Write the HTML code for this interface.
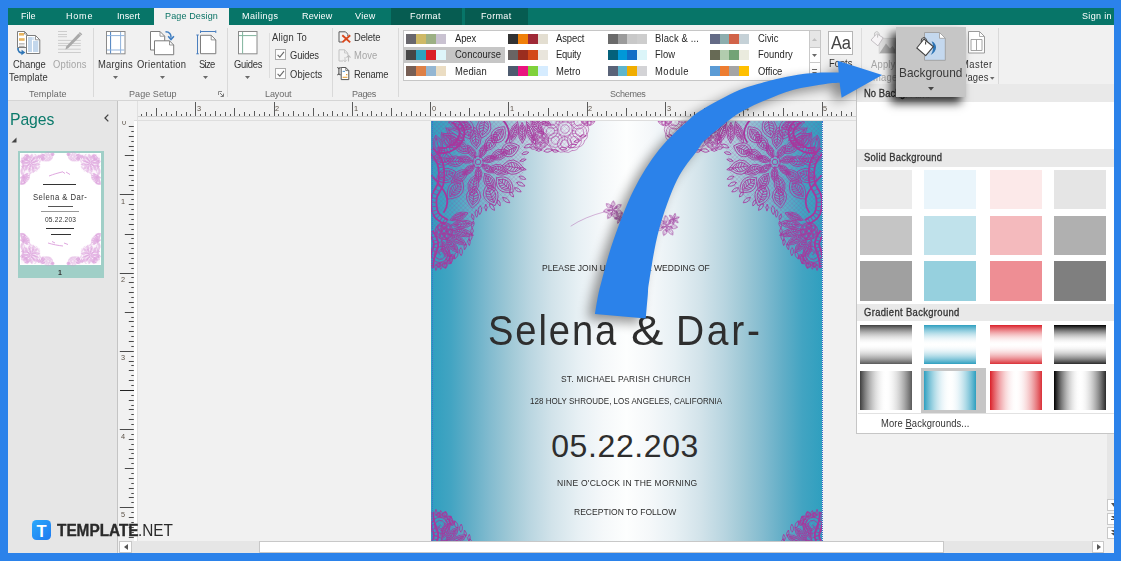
<!DOCTYPE html>
<html><head><meta charset="utf-8"><title>Publisher - Page Design Background</title>
<style>
html,body{margin:0;padding:0;}
body{width:1121px;height:561px;overflow:hidden;background:#2b82ea;position:relative;font-family:"Liberation Sans", sans-serif;}
.t{position:absolute;white-space:pre;line-height:normal;transform-origin:0 0;font-family:"Liberation Sans", sans-serif;}
.a{position:absolute;}

.win{position:absolute;left:8px;top:8px;width:1106px;height:545px;background:#f1f1f1;overflow:hidden;}
.sep{position:absolute;width:1px;background:#d8d8d8;}
svg{position:absolute;overflow:visible;}
.sw{position:absolute;width:52px;height:39.4px;}
.sc{position:absolute;height:10px;width:39.4px;display:flex;}
.sc i{display:block;flex:1;height:10px;}
.cb{position:absolute;width:9px;height:9px;border:1px solid #ababab;background:#fdfdfd;box-sizing:content-box;}
.sb{position:absolute;background:#fff;border:1px solid #c8c8c8;box-sizing:border-box;}

</style></head><body>
<div class="a" style="left:8px;top:8px;width:1106px;height:545px;background:#f1f1f1;"></div>
<div class="a" style="left:8px;top:8px;width:1106px;height:16.5px;background:#077568;"></div>
<div class="a" style="left:390.5px;top:8px;width:71px;height:16.5px;background:#065c51;"></div>
<div class="a" style="left:464.7px;top:8px;width:63.3px;height:16.5px;background:#065c51;"></div>
<div class="a" style="left:154px;top:8px;width:75px;height:17px;background:#f1f1f1;"></div>
<div class="a" style="left:8px;top:100px;width:1106px;height:1px;background:#d5d5d5;"></div>
<div class="a" style="left:92.5px;top:28px;width:1px;height:69px;background:#d9d9d9;"></div>
<div class="a" style="left:226.5px;top:28px;width:1px;height:69px;background:#d9d9d9;"></div>
<div class="a" style="left:331.6px;top:28px;width:1px;height:69px;background:#d9d9d9;"></div>
<div class="a" style="left:397.5px;top:28px;width:1px;height:69px;background:#d9d9d9;"></div>
<div class="a" style="left:268.5px;top:33px;width:1px;height:45px;background:#dddddd;"></div>
<div class="a" style="left:861px;top:28px;width:1px;height:56px;background:#dcdcdc;"></div>
<div class="a" style="left:998.2px;top:28px;width:1px;height:56px;background:#d9d9d9;"></div>
<svg style="left:112.5px;top:75.8px" width="5" height="3" viewBox="0 0 5 3"><path d="M0 0H5L2.5 3Z" fill="#6a6a6a"/></svg>
<svg style="left:160.0px;top:75.8px" width="5" height="3" viewBox="0 0 5 3"><path d="M0 0H5L2.5 3Z" fill="#6a6a6a"/></svg>
<svg style="left:203.0px;top:75.8px" width="5" height="3" viewBox="0 0 5 3"><path d="M0 0H5L2.5 3Z" fill="#6a6a6a"/></svg>
<svg style="left:244.5px;top:75.8px" width="5" height="3" viewBox="0 0 5 3"><path d="M0 0H5L2.5 3Z" fill="#6a6a6a"/></svg>
<svg style="left:217.5px;top:91.3px" width="6" height="6" viewBox="0 0 6 6"><path d="M0.5 4V0.5H4" fill="none" stroke="#8a8a8a" stroke-width="1"/><path d="M2 2L5.3 5.3M5.5 2.6V5.5H2.6" fill="none" stroke="#7a7a7a" stroke-width="1"/></svg>
<div class="cb" style="left:275px;top:49.3px"></div>
<svg style="left:276px;top:50.3px" width="10" height="10" viewBox="0 0 10 10"><path d="M1.6 4.8L3.8 7.2L8 1.8" fill="none" stroke="#6a6a6a" stroke-width="1.1"/></svg>
<div class="cb" style="left:275px;top:68px"></div>
<svg style="left:276px;top:69px" width="10" height="10" viewBox="0 0 10 10"><path d="M1.6 4.8L3.8 7.2L8 1.8" fill="none" stroke="#6a6a6a" stroke-width="1.1"/></svg>
<div class="a" style="left:402.5px;top:30px;width:418.5px;height:50.5px;background:#fff;border:1px solid #c6c6c6;box-sizing:border-box;"></div>
<div class="a" style="left:403.5px;top:47.3px;width:101.5px;height:15.6px;background:#c6c6c6;"></div>
<div class="sc" style="left:406.2px;top:34.1px;"><i style="background:#69676d"></i><i style="background:#ceb966"></i><i style="background:#9cb084"></i><i style="background:#c9c2d1"></i></div>
<div class="sc" style="left:406.2px;top:50.2px;"><i style="background:#464646"></i><i style="background:#2da2bf"></i><i style="background:#da1f28"></i><i style="background:#def5fa"></i></div>
<div class="sc" style="left:406.2px;top:66.4px;"><i style="background:#775f55"></i><i style="background:#dd8047"></i><i style="background:#94b6d2"></i><i style="background:#ebddc3"></i></div>
<div class="sc" style="left:508.2px;top:34.1px;"><i style="background:#323232"></i><i style="background:#f07f09"></i><i style="background:#9f2936"></i><i style="background:#e3ded1"></i></div>
<div class="sc" style="left:508.2px;top:50.2px;"><i style="background:#696464"></i><i style="background:#9b2d1f"></i><i style="background:#d34817"></i><i style="background:#e9e5dc"></i></div>
<div class="sc" style="left:508.2px;top:66.4px;"><i style="background:#4e5b6f"></i><i style="background:#e9157f"></i><i style="background:#7fd13b"></i><i style="background:#d6ecff"></i></div>
<div class="sc" style="left:607.8px;top:34.1px;"><i style="background:#6a6a6a"></i><i style="background:#9b9b9b"></i><i style="background:#c8c8c8"></i><i style="background:#cdcdcd"></i></div>
<div class="sc" style="left:607.8px;top:50.2px;"><i style="background:#04617b"></i><i style="background:#0098d8"></i><i style="background:#0f6fc6"></i><i style="background:#dbf5f9"></i></div>
<div class="sc" style="left:607.8px;top:66.4px;"><i style="background:#5a6378"></i><i style="background:#5fb5cc"></i><i style="background:#f0ad00"></i><i style="background:#d3d3d6"></i></div>
<div class="sc" style="left:709.7px;top:34.1px;"><i style="background:#646b86"></i><i style="background:#8cadae"></i><i style="background:#d16349"></i><i style="background:#c5d1d7"></i></div>
<div class="sc" style="left:709.7px;top:50.2px;"><i style="background:#676a55"></i><i style="background:#b2ccae"></i><i style="background:#72a376"></i><i style="background:#eaebde"></i></div>
<div class="sc" style="left:709.7px;top:66.4px;"><i style="background:#5b9bd5"></i><i style="background:#ed7d31"></i><i style="background:#a5a5a5"></i><i style="background:#ffc000"></i></div>
<div class="a" style="left:808.5px;top:31px;width:10.5px;height:48.5px;background:#ffffff;border-left:1px solid #c9c9c9;"></div>
<div class="a" style="left:809.5px;top:31px;width:10.5px;height:16px;background:#e6e6e6;"></div>
<div class="a" style="left:809.5px;top:47px;width:10.5px;height:1px;background:#c9c9c9;"></div>
<div class="a" style="left:809.5px;top:62.3px;width:10.5px;height:1px;background:#c9c9c9;"></div>
<svg style="left:812px;top:37.5px" width="5" height="3" viewBox="0 0 5 3"><path d="M0 3H5L2.5 0Z" fill="#c0c0c0"/></svg>
<svg style="left:812.1px;top:54.0px" width="5" height="3" viewBox="0 0 5 3"><path d="M0 0H5L2.5 3Z" fill="#6a6a6a"/></svg>
<div class="a" style="left:812px;top:69.3px;width:5.4px;height:1px;background:#6a6a6a;"></div>
<svg style="left:812.1px;top:71.5px" width="5" height="3" viewBox="0 0 5 3"><path d="M0 0H5L2.5 3Z" fill="#6a6a6a"/></svg>
<div class="a" style="left:827.8px;top:31px;width:25px;height:23.7px;background:#fff;border:1px solid #b5b5b5;box-sizing:border-box;"></div>
<div class="a" style="left:8px;top:101px;width:109.4px;height:452px;background:#e6e6e6;"></div>
<div class="a" style="left:117.4px;top:101px;width:1px;height:452px;background:#c4c4c4;"></div>
<svg style="left:103.5px;top:113.5px" width="5" height="8" viewBox="0 0 5 8"><path d="M4.3 0.6L1 4L4.3 7.4" fill="none" stroke="#444" stroke-width="1.3"/></svg>
<svg style="left:11px;top:137px" width="6" height="6" viewBox="0 0 6 6"><path d="M5.5 0.5V5.5H0.5Z" fill="#444"/></svg>
<div class="a" style="left:18px;top:151.2px;width:85.6px;height:127.2px;background:#a0cfc7;"></div>
<div class="a" style="left:20.1px;top:153.4px;width:81.4px;height:112.1px;background:#fff;"></div>
<svg style="left:21.3px;top:154.4px;--w1:1.3px;--w2:0.6px;--w3:1px;--w4:2.8px" width="79" height="109.8" viewBox="431 116.2 391 547.4" preserveAspectRatio="none" fill="none" stroke="#d695d6" stroke-linecap="round" opacity="0.85"><use href="#lace4"/></svg><svg style="left:0;top:0" width="120" height="300" fill="none" stroke="#e0a8e0" stroke-width="1"><path d="M49 176C54 174 58 173 62 172M62 171.5l3 2M66 172l4 2.5M48 243C53 244.5 58 245.5 63 246M64 243l4 1.5M52 241.5l3 1.5"/></svg>
<div class="a" style="left:42.8px;top:183.7px;width:33.4px;height:1px;background:#333;"></div>
<div class="a" style="left:48px;top:205.9px;width:24.8px;height:1px;background:#555;"></div>
<div class="a" style="left:40.7px;top:210.5px;width:38.5px;height:1px;background:#999;"></div>
<div class="a" style="left:46px;top:227.8px;width:27.6px;height:1px;background:#333;"></div>
<div class="a" style="left:50.5px;top:233.8px;width:20.1px;height:1px;background:#333;"></div>
<div class="a" style="left:118.4px;top:101px;width:988.6px;height:20px;background:#f1f1f1;"></div>
<div class="a" style="left:138px;top:116px;width:969px;height:1px;background:#cfcfcf;"></div>
<div class="a" style="left:431px;top:117.5px;width:391px;height:3.2px;background:#fff;"></div>
<div class="a" style="left:119px;top:120px;width:988px;height:1px;background:#dedede;"></div>
<div class="a" style="left:118.4px;top:121px;width:15.4px;height:420px;background:#f1f1f1;"></div>
<div class="a" style="left:133.8px;top:121px;width:3.1px;height:420px;background:#ffffff;"></div>
<div class="a" style="left:137px;top:101px;width:1px;height:440px;background:#e0e0e0;"></div>
<svg style="left:0;top:0" width="1121" height="130"><path d="M141.5 116v-2M146.5 116v-4M151.5 116v-2M156.5 116v-8M161.5 116v-2M166.5 116v-4M171.5 116v-2M176.5 116v-5M181.5 116v-2M186.5 116v-4M190.5 116v-2M195.5 116v-14M200.5 116v-2M205.5 116v-4M210.5 116v-2M215.5 116v-5M220.5 116v-2M225.5 116v-4M230.5 116v-2M234.5 116v-8M239.5 116v-2M244.5 116v-4M249.5 116v-2M254.5 116v-5M259.5 116v-2M264.5 116v-4M269.5 116v-2M274.5 116v-14M278.5 116v-2M283.5 116v-4M288.5 116v-2M293.5 116v-5M298.5 116v-2M303.5 116v-4M308.5 116v-2M313.5 116v-8M318.5 116v-2M323.5 116v-4M327.5 116v-2M332.5 116v-5M337.5 116v-2M342.5 116v-4M347.5 116v-2M352.5 116v-14M357.5 116v-2M362.5 116v-4M367.5 116v-2M371.5 116v-5M376.5 116v-2M381.5 116v-4M386.5 116v-2M391.5 116v-8M396.5 116v-2M401.5 116v-4M406.5 116v-2M411.5 116v-5M416.5 116v-2M420.5 116v-4M425.5 116v-2M430.5 116v-14M435.5 116v-2M440.5 116v-4M445.5 116v-2M450.5 116v-5M455.5 116v-2M460.5 116v-4M464.5 116v-2M469.5 116v-8M474.5 116v-2M479.5 116v-4M484.5 116v-2M489.5 116v-5M494.5 116v-2M499.5 116v-4M504.5 116v-2M508.5 116v-14M513.5 116v-2M518.5 116v-4M523.5 116v-2M528.5 116v-5M533.5 116v-2M538.5 116v-4M543.5 116v-2M548.5 116v-8M553.5 116v-2M557.5 116v-4M562.5 116v-2M567.5 116v-5M572.5 116v-2M577.5 116v-4M582.5 116v-2M587.5 116v-14M592.5 116v-2M597.5 116v-4M601.5 116v-2M606.5 116v-5M611.5 116v-2M616.5 116v-4M621.5 116v-2M626.5 116v-8M631.5 116v-2M636.5 116v-4M641.5 116v-2M646.5 116v-5M650.5 116v-2M655.5 116v-4M660.5 116v-2M665.5 116v-14M670.5 116v-2M675.5 116v-4M680.5 116v-2M685.5 116v-5M690.5 116v-2M694.5 116v-4M699.5 116v-2M704.5 116v-8M709.5 116v-2M714.5 116v-4M719.5 116v-2M724.5 116v-5M729.5 116v-2M734.5 116v-4M739.5 116v-2M743.5 116v-14M748.5 116v-2M753.5 116v-4M758.5 116v-2M763.5 116v-5M768.5 116v-2M773.5 116v-4M778.5 116v-2M783.5 116v-8M787.5 116v-2M792.5 116v-4M797.5 116v-2M802.5 116v-5M807.5 116v-2M812.5 116v-4M817.5 116v-2M822.5 116v-14M827.5 116v-2M831.5 116v-4M836.5 116v-2M841.5 116v-5M846.5 116v-2M851.5 116v-4M856.5 116v-2" stroke="#5a5a5a" stroke-width="1" fill="none"/></svg>
<svg style="left:0;top:0" width="140" height="561"><path d="M133.8 126.5h-5M133.8 131.5h-2.5M133.8 136.5h-5M133.8 141.5h-2.5M133.8 146.5h-5M133.8 150.5h-2.5M133.8 155.5h-9M133.8 160.5h-2.5M133.8 165.5h-5M133.8 170.5h-2.5M133.8 175.5h-5M133.8 180.5h-2.5M133.8 185.5h-5M133.8 190.5h-2.5M133.8 194.5h-14M133.8 199.5h-2.5M133.8 204.5h-5M133.8 209.5h-2.5M133.8 214.5h-5M133.8 219.5h-2.5M133.8 224.5h-5M133.8 229.5h-2.5M133.8 234.5h-9M133.8 238.5h-2.5M133.8 243.5h-5M133.8 248.5h-2.5M133.8 253.5h-5M133.8 258.5h-2.5M133.8 263.5h-5M133.8 268.5h-2.5M133.8 273.5h-14M133.8 277.5h-2.5M133.8 282.5h-5M133.8 287.5h-2.5M133.8 292.5h-5M133.8 297.5h-2.5M133.8 302.5h-5M133.8 307.5h-2.5M133.8 312.5h-9M133.8 317.5h-2.5M133.8 321.5h-5M133.8 326.5h-2.5M133.8 331.5h-5M133.8 336.5h-2.5M133.8 341.5h-5M133.8 346.5h-2.5M133.8 351.5h-14M133.8 356.5h-2.5M133.8 361.5h-5M133.8 365.5h-2.5M133.8 370.5h-5M133.8 375.5h-2.5M133.8 380.5h-5M133.8 385.5h-2.5M133.8 390.5h-9M133.8 395.5h-2.5M133.8 400.5h-5M133.8 405.5h-2.5M133.8 409.5h-5M133.8 414.5h-2.5M133.8 419.5h-5M133.8 424.5h-2.5M133.8 429.5h-14M133.8 434.5h-2.5M133.8 439.5h-5M133.8 444.5h-2.5M133.8 449.5h-5M133.8 453.5h-2.5M133.8 458.5h-5M133.8 463.5h-2.5M133.8 468.5h-9M133.8 473.5h-2.5M133.8 478.5h-5M133.8 483.5h-2.5M133.8 488.5h-5M133.8 493.5h-2.5M133.8 497.5h-5M133.8 502.5h-2.5M133.8 507.5h-14M133.8 512.5h-2.5M133.8 517.5h-5M133.8 522.5h-2.5M133.8 527.5h-5M133.8 532.5h-2.5M133.8 537.5h-5" stroke="#4a4a4a" stroke-width="1" fill="none"/></svg>
<div class="a" style="left:119px;top:117.5px;width:15px;height:3.5px;background:#f1f1f1;z-index:3;"></div>
<div class="a" style="left:119.5px;top:390px;width:14.5px;height:1px;background:#222;"></div>
<div class="a" id="page" style="left:431px;top:121px;width:391px;height:420px;background:linear-gradient(90deg,#2f9fbf 0%,#42a4c2 5%,#62aec7 10%,#82bbcf 15%,#9ec8d6 20%,#b8d5e0 25%,#d2e3ea 31%,#e7f0f4 37.7%,#f5f8fa 44%,#fdfefe 50%,#f5f8fa 56%,#e7f0f4 62.3%,#d2e3ea 69%,#b8d5e0 75%,#9ec8d6 80%,#82bbcf 85%,#62aec7 90%,#42a4c2 95%,#2f9fbf 100%);overflow:hidden;"><svg style="left:0;top:0;--w1:0.85px;--w2:0.4px;--w3:0.6px;--w4:1.8px" width="391" height="420" viewBox="431 121 391 420" fill="none" stroke="#a8369d" stroke-linecap="round" stroke-linejoin="round"><defs><g id="lacec"><clipPath id="lc"><polygon points="431,116.2 593,116.2 590,124 584,136 572,146 556,151 540,150 528,146 524,160 523,178 518,190 506,200 492,207 480,210 473,218 472,232 469,243 461,252 451,259 441,266 431,270"/></clipPath><path d="M255.0 116.2l170 170M425.0 116.2l-170 170M259.4 116.2l170 170M429.4 116.2l-170 170M263.8 116.2l170 170M433.8 116.2l-170 170M268.2 116.2l170 170M438.2 116.2l-170 170M272.6 116.2l170 170M442.6 116.2l-170 170M277.0 116.2l170 170M447.0 116.2l-170 170M281.4 116.2l170 170M451.4 116.2l-170 170M285.8 116.2l170 170M455.8 116.2l-170 170M290.2 116.2l170 170M460.2 116.2l-170 170M294.6 116.2l170 170M464.6 116.2l-170 170M299.0 116.2l170 170M469.0 116.2l-170 170M303.4 116.2l170 170M473.4 116.2l-170 170M307.8 116.2l170 170M477.8 116.2l-170 170M312.2 116.2l170 170M482.2 116.2l-170 170M316.6 116.2l170 170M486.6 116.2l-170 170M321.0 116.2l170 170M491.0 116.2l-170 170M325.4 116.2l170 170M495.4 116.2l-170 170M329.8 116.2l170 170M499.8 116.2l-170 170M334.2 116.2l170 170M504.2 116.2l-170 170M338.6 116.2l170 170M508.6 116.2l-170 170M343.0 116.2l170 170M513.0 116.2l-170 170M347.4 116.2l170 170M517.4 116.2l-170 170M351.8 116.2l170 170M521.8 116.2l-170 170M356.2 116.2l170 170M526.2 116.2l-170 170M360.6 116.2l170 170M530.6 116.2l-170 170M365.0 116.2l170 170M535.0 116.2l-170 170M369.4 116.2l170 170M539.4 116.2l-170 170M373.8 116.2l170 170M543.8 116.2l-170 170M378.2 116.2l170 170M548.2 116.2l-170 170M382.6 116.2l170 170M552.6 116.2l-170 170M387.0 116.2l170 170M557.0 116.2l-170 170M391.4 116.2l170 170M561.4 116.2l-170 170M395.8 116.2l170 170M565.8 116.2l-170 170M400.2 116.2l170 170M570.2 116.2l-170 170M404.6 116.2l170 170M574.6 116.2l-170 170M409.0 116.2l170 170M579.0 116.2l-170 170M413.4 116.2l170 170M583.4 116.2l-170 170M417.8 116.2l170 170M587.8 116.2l-170 170M422.2 116.2l170 170M592.2 116.2l-170 170M426.6 116.2l170 170M596.6 116.2l-170 170M431.0 116.2l170 170M601.0 116.2l-170 170M435.4 116.2l170 170M605.4 116.2l-170 170M439.8 116.2l170 170M609.8 116.2l-170 170M444.2 116.2l170 170M614.2 116.2l-170 170M448.6 116.2l170 170M618.6 116.2l-170 170M453.0 116.2l170 170M623.0 116.2l-170 170M457.4 116.2l170 170M627.4 116.2l-170 170M461.8 116.2l170 170M631.8 116.2l-170 170M466.2 116.2l170 170M636.2 116.2l-170 170M470.6 116.2l170 170M640.6 116.2l-170 170M475.0 116.2l170 170M645.0 116.2l-170 170M479.4 116.2l170 170M649.4 116.2l-170 170M483.8 116.2l170 170M653.8 116.2l-170 170M488.2 116.2l170 170M658.2 116.2l-170 170M492.6 116.2l170 170M662.6 116.2l-170 170M497.0 116.2l170 170M667.0 116.2l-170 170M501.4 116.2l170 170M671.4 116.2l-170 170M505.8 116.2l170 170M675.8 116.2l-170 170M510.2 116.2l170 170M680.2 116.2l-170 170M514.6 116.2l170 170M684.6 116.2l-170 170M519.0 116.2l170 170M689.0 116.2l-170 170M523.4 116.2l170 170M693.4 116.2l-170 170M527.8 116.2l170 170M697.8 116.2l-170 170M532.2 116.2l170 170M702.2 116.2l-170 170M536.6 116.2l170 170M706.6 116.2l-170 170M541.0 116.2l170 170M711.0 116.2l-170 170M545.4 116.2l170 170M715.4 116.2l-170 170M549.8 116.2l170 170M719.8 116.2l-170 170M554.2 116.2l170 170M724.2 116.2l-170 170M558.6 116.2l170 170M728.6 116.2l-170 170M563.0 116.2l170 170M733.0 116.2l-170 170M567.4 116.2l170 170M737.4 116.2l-170 170M571.8 116.2l170 170M741.8 116.2l-170 170M576.2 116.2l170 170M746.2 116.2l-170 170M580.6 116.2l170 170M750.6 116.2l-170 170M585.0 116.2l170 170M755.0 116.2l-170 170M589.4 116.2l170 170M759.4 116.2l-170 170M593.8 116.2l170 170M763.8 116.2l-170 170M598.2 116.2l170 170M768.2 116.2l-170 170M602.6 116.2l170 170M772.6 116.2l-170 170M607.0 116.2l170 170M777.0 116.2l-170 170M611.4 116.2l170 170M781.4 116.2l-170 170M615.8 116.2l170 170M785.8 116.2l-170 170M620.2 116.2l170 170M790.2 116.2l-170 170M624.6 116.2l170 170M794.6 116.2l-170 170M629.0 116.2l170 170M799.0 116.2l-170 170M633.4 116.2l170 170M803.4 116.2l-170 170M637.8 116.2l170 170M807.8 116.2l-170 170M642.2 116.2l170 170M812.2 116.2l-170 170M646.6 116.2l170 170M816.6 116.2l-170 170M651.0 116.2l170 170M821.0 116.2l-170 170M655.4 116.2l170 170M825.4 116.2l-170 170M659.8 116.2l170 170M829.8 116.2l-170 170M664.2 116.2l170 170M834.2 116.2l-170 170M668.6 116.2l170 170M838.6 116.2l-170 170M673.0 116.2l170 170M843.0 116.2l-170 170M677.4 116.2l170 170M847.4 116.2l-170 170M681.8 116.2l170 170M851.8 116.2l-170 170M686.2 116.2l170 170M856.2 116.2l-170 170M690.6 116.2l170 170M860.6 116.2l-170 170M695.0 116.2l170 170M865.0 116.2l-170 170M699.4 116.2l170 170M869.4 116.2l-170 170M703.8 116.2l170 170M873.8 116.2l-170 170M708.2 116.2l170 170M878.2 116.2l-170 170M712.6 116.2l170 170M882.6 116.2l-170 170M717.0 116.2l170 170M887.0 116.2l-170 170M721.4 116.2l170 170M891.4 116.2l-170 170M725.8 116.2l170 170M895.8 116.2l-170 170M730.2 116.2l170 170M900.2 116.2l-170 170M734.6 116.2l170 170M904.6 116.2l-170 170M739.0 116.2l170 170M909.0 116.2l-170 170M743.4 116.2l170 170M913.4 116.2l-170 170M747.8 116.2l170 170M917.8 116.2l-170 170M752.2 116.2l170 170M922.2 116.2l-170 170M756.6 116.2l170 170M926.6 116.2l-170 170" clip-path="url(#lc)" style="stroke-width:var(--w2)" opacity="0.45"/><path d="M502.2 165.6Q513.5 152.5 524.3 168.8Q509.2 181.3 502.2 165.6M504.8 166.0Q513.9 157.3 521.2 168.4Q511.0 176.9 504.8 166.0M505.5 166.0L520.3 168.2M508.0 163.1L509.9 166.7L507.1 169.6M510.8 162.5L512.6 167.1L509.6 171.0M513.6 162.9L515.4 167.5L512.3 171.4M516.3 164.5L518.1 167.9L515.4 170.6M496.6 177.9Q512.9 172.8 513.2 192.1Q494.0 194.8 496.6 177.9M498.6 179.6Q510.7 177.0 510.9 190.1Q497.9 192.0 498.6 179.6M499.1 180.0L510.2 189.6M502.7 178.8L502.4 182.9L498.5 183.8M505.4 179.8L504.5 184.6L499.8 186.3M507.4 181.6L506.5 186.4L501.9 188.1M508.8 184.3L508.6 188.2L504.8 189.0M486.9 184.8Q503.9 188.1 495.1 205.7Q476.7 198.8 486.9 184.8M487.9 187.3Q500.0 190.9 494.0 202.8Q481.5 198.1 487.9 187.3M488.1 187.9L493.6 201.9M491.9 188.7L489.8 192.1L485.8 191.0M493.9 190.8L490.8 194.7L485.9 193.9M494.9 193.4L491.8 197.3L486.9 196.5M494.9 196.6L492.8 199.9L489.1 198.8M475.0 186.3Q488.2 197.2 472.2 208.2Q459.4 193.5 475.0 186.3M474.6 188.9Q483.5 197.7 472.6 205.1Q463.9 195.2 474.6 188.9M474.5 189.5L472.7 204.3M477.5 192.0L474.0 193.9L471.1 191.2M478.2 194.7L473.7 196.6L469.7 193.7M477.9 197.5L473.3 199.4L469.4 196.4M476.3 200.2L473.0 202.1L470.2 199.4M462.6 180.9Q467.8 197.9 447.7 199.1Q444.9 179.2 462.6 180.9M460.8 183.1Q463.4 195.8 449.8 196.6Q447.8 183.1 460.8 183.1M460.3 183.7L450.4 195.9M461.6 187.0L457.7 186.9L456.8 183.1M460.9 189.4L456.2 188.8L454.6 184.2M459.7 191.5L454.7 190.6L452.7 185.8M457.8 193.2L453.1 192.5L451.5 188.0M455.3 194.4L451.6 194.4L450.8 190.8M455.5 171.7Q453.2 188.2 436.1 180.0Q441.9 161.9 455.5 171.7M453.2 172.7Q450.4 184.5 438.8 178.8Q442.7 166.6 453.2 172.7M452.6 172.9L439.6 178.5M452.2 176.6L448.7 174.6L449.6 170.7M450.3 178.5L446.3 175.6L446.9 170.8M447.8 179.6L443.9 176.7L444.5 171.8M444.8 179.6L441.5 177.7L442.4 174.0M453.7 159.1Q442.2 172.7 430.3 156.4Q445.7 143.3 453.7 159.1M450.9 158.8Q441.6 167.9 433.6 156.8Q444.0 147.8 450.9 158.8M450.2 158.7L434.6 156.9M448.1 161.6L446.1 158.2L448.8 155.5M445.7 162.3L443.7 158.0L446.6 154.2M443.2 162.5L441.3 157.7L444.3 153.5M440.8 161.8L438.9 157.4L441.8 153.6M438.4 160.2L436.4 157.1L439.1 154.5M459.1 146.5Q444.0 152.2 443.7 133.8Q461.8 130.5 459.1 146.5M457.3 144.9Q446.0 148.0 445.9 135.6Q458.1 133.2 457.3 144.9M456.8 144.6L446.5 136.1M453.5 145.9L453.7 142.0L457.5 141.0M451.0 145.2L451.8 140.4L456.3 138.8M449.1 143.6L449.9 138.8L454.4 137.2M447.9 141.0L448.0 137.3L451.6 136.4M470.0 138.9Q452.4 134.2 462.0 116.0Q480.8 124.3 470.0 138.9M469.0 136.2Q456.6 131.5 463.1 119.2Q475.9 124.8 469.0 136.2M468.8 135.5L463.4 120.1M465.2 134.7L467.4 131.5L471.1 132.7M463.4 132.8L466.5 129.1L471.3 130.1M462.2 130.6L465.7 126.7L470.9 127.6M461.8 128.0L464.9 124.4L469.6 125.3M462.1 125.1L464.1 122.0L467.6 123.2M481.9 137.9Q469.0 126.2 485.6 115.5Q497.9 131.0 481.9 137.9M482.4 135.2Q473.8 125.9 485.1 118.7Q493.5 129.1 482.4 135.2M482.5 134.5L484.9 119.6M479.6 131.9L483.2 130.1L486.1 133.0M479.0 129.1L483.7 127.3L487.5 130.5M479.5 126.3L484.1 124.6L488.0 127.7M481.1 123.6L484.6 121.8L487.3 124.6M492.7 142.5Q486.3 127.7 504.6 126.7Q508.7 144.5 492.7 142.5M494.1 140.6Q490.6 129.5 503.0 128.9Q505.8 141.0 494.1 140.6M494.5 140.1L502.5 129.5M493.0 136.9L496.9 136.9L498.1 140.7M493.6 134.4L498.4 134.9L500.3 139.4M495.1 132.4L499.9 133.0L501.7 137.4M497.6 131.1L501.4 131.0L502.3 134.6M500.8 153.1Q503.2 137.1 519.4 145.9Q513.4 163.3 500.8 153.1M503.0 152.3Q505.9 140.9 516.8 146.9Q512.8 158.7 503.0 152.3M503.6 152.0L516.1 147.2M504.0 148.4L507.4 150.6L506.3 154.4M505.9 146.7L509.7 149.7L508.9 154.4M508.2 145.8L512.0 148.8L511.2 153.5M511.1 145.9L514.3 147.9L513.2 151.5M490.3 166.6Q501.7 159.5 508.6 173.3Q494.4 179.4 490.3 166.6M492.5 167.4Q501.4 163.0 506.0 172.4Q496.4 176.5 492.5 167.4M493.1 167.6L505.3 172.1M495.4 166.1L496.8 169.0L493.9 170.2M497.9 166.2L499.1 169.8L495.8 171.8M500.2 166.9L501.4 170.7L498.0 172.7M502.2 168.6L503.6 171.5L500.7 172.8M484.7 173.4Q498.3 175.3 494.9 190.8Q479.7 186.2 484.7 173.4M485.9 175.4Q495.8 177.9 493.5 188.4Q483.2 185.3 485.9 175.4M486.2 176.0L493.0 187.7M489.0 176.4L488.3 179.5L485.2 178.6M490.9 178.1L489.5 181.7L485.7 181.1M492.3 180.2L490.8 183.8L486.9 183.3M492.9 182.8L492.1 186.0L488.9 185.2M475.4 174.9Q484.4 186.2 471.1 196.0Q462.7 181.7 475.4 174.9M474.9 177.4Q480.7 186.3 471.7 193.0Q466.0 183.3 474.9 177.4M474.7 178.1L471.9 192.2M476.6 180.4L473.9 182.3L472.1 179.5M476.9 183.1L473.3 184.9L470.8 181.9M476.5 185.8L472.8 187.5L470.1 184.5M475.1 188.3L472.3 190.1L470.4 187.4M467.6 170.1Q467.4 184.2 451.3 183.0Q453.9 167.0 467.6 170.1M465.7 171.7Q464.5 182.0 453.6 181.2Q455.4 170.4 465.7 171.7M465.2 172.1L454.2 180.7M465.1 175.0L461.9 174.7L462.3 171.4M463.7 177.2L459.9 176.2L459.9 172.3M461.7 178.9L457.8 177.8L457.8 173.8M459.1 179.9L455.8 179.4L456.1 176.1M464.8 161.6Q455.6 172.2 444.0 160.9Q456.2 150.4 464.8 161.6M462.3 161.5Q454.8 168.7 446.9 161.0Q455.2 153.9 462.3 161.5M461.7 161.5L447.7 161.1M459.8 163.7L457.5 161.4L459.9 159.2M457.2 164.4L454.9 161.3L457.4 158.3M454.6 164.5L452.3 161.2L454.8 158.1M452.0 163.6L449.7 161.1L452.1 158.8M468.2 153.3Q454.9 155.7 453.5 140.3Q469.0 139.8 468.2 153.3M466.4 151.7Q456.5 152.6 455.6 142.1Q466.1 141.8 466.4 151.7M466.0 151.3L456.1 142.6M463.2 151.8L463.0 148.7L466.2 148.6M461.0 150.9L461.1 147.0L464.9 146.4M459.1 149.3L459.3 145.4L463.2 144.7M457.7 147.1L457.5 143.8L460.7 143.6M476.6 148.9Q464.5 140.6 474.4 127.0Q486.8 138.3 476.6 148.9M476.4 146.3Q468.0 139.3 474.7 130.1Q483.1 137.8 476.4 146.3M476.3 145.6L474.8 131.0M473.8 143.8L475.8 141.3L478.4 143.3M472.7 141.3L475.6 138.5L478.9 140.6M472.3 138.6L475.3 135.8L478.8 137.9M472.8 135.7L475.0 133.1L477.7 135.2M485.2 151.0Q481.0 137.5 496.8 133.4Q499.3 149.5 485.2 151.0M486.6 148.9Q484.5 138.6 495.2 135.9Q496.9 146.8 486.6 148.9M487.0 148.4L494.7 136.6M486.1 145.5L489.3 144.8L489.9 148.0M486.8 143.0L490.7 142.6L492.0 146.4M488.2 140.7L492.2 140.5L493.5 144.2M490.3 138.9L493.6 138.3L494.3 141.5M490.4 157.7Q494.8 145.0 508.8 151.4Q501.7 165.0 490.4 157.7M492.6 156.9Q496.7 147.9 506.2 152.2Q501.4 161.5 492.6 156.9M493.2 156.7L505.5 152.5M494.0 154.1L497.0 155.4L495.5 158.3M496.0 152.6L499.2 154.7L497.9 158.3M498.2 151.7L501.5 153.9L500.2 157.6M500.9 151.7L503.8 153.1L502.4 156.0M481.9 164.6Q490.9 162.4 494.2 172.9Q483.2 173.8 481.9 164.6M483.4 165.6Q490.3 164.6 492.5 171.8Q485.0 172.4 483.4 165.6M483.7 165.9L492.0 171.4M486.5 165.8L487.5 168.4L484.7 168.4M489.2 167.3L490.0 170.1L487.1 170.4M478.2 166.7Q485.5 172.9 478.8 182.2Q471.4 173.5 478.2 166.7M478.3 168.6Q483.3 173.8 478.8 180.1Q473.7 174.2 478.3 168.6M478.3 169.0L478.7 179.4M479.8 170.5L478.5 172.9L477.0 170.7M480.4 172.9L478.6 175.3L476.5 173.0M480.3 175.3L478.7 177.7L476.8 175.5M474.4 165.1Q474.1 174.7 462.6 175.2Q464.9 163.9 474.4 165.1M473.0 166.3Q472.0 173.4 464.3 173.8Q465.8 166.1 473.0 166.3M472.7 166.6L464.8 173.4M472.4 168.7L469.7 169.1L470.6 166.5M471.0 170.6L467.9 170.7L468.4 167.6M468.9 172.0L466.1 172.2L466.7 169.4M473.4 161.1Q465.1 166.9 457.2 157.8Q468.0 152.5 473.4 161.1M471.5 160.7Q464.8 164.4 459.5 158.3Q466.8 154.7 471.5 160.7M471.0 160.6L460.1 158.4M469.0 161.7L467.0 159.8L469.6 158.8M466.4 161.8L464.5 159.3L467.2 157.7M463.9 161.0L462.0 158.8L464.6 157.5M475.5 158.0Q466.3 156.2 467.6 145.1Q478.1 149.0 475.5 158.0M474.6 156.4Q467.8 154.4 468.7 146.9Q475.8 149.5 474.6 156.4M474.3 156.1L469.0 147.4M471.8 155.0L471.9 152.2L474.6 153.3M469.9 152.5L470.3 149.5L473.1 150.5M479.9 157.7Q476.1 148.8 486.3 143.3Q489.1 154.6 479.9 157.7M480.7 156.0Q478.5 149.0 485.4 145.4Q487.3 153.0 480.7 156.0M480.9 155.6L485.1 145.9M480.2 153.5L482.5 152.0L482.8 154.7M480.7 151.1L483.4 149.8L484.3 152.7M481.9 148.9L484.4 147.5L485.1 150.4M482.6 160.8Q487.1 152.4 497.6 157.0Q490.6 166.1 482.6 160.8M484.4 160.4Q488.4 154.4 495.5 157.5Q490.8 163.7 484.4 160.4M484.8 160.3L494.9 157.7M486.0 158.5L488.6 159.3L486.7 161.2M488.1 157.4L490.9 158.7L489.1 161.2M490.6 157.0L493.3 158.1L491.4 160.4M475.2 162.0a2.8 2.8 0 1 0 5.6 0a2.8 2.8 0 1 0 -5.6 0M472.8 162.0a5.2 5.2 0 1 0 10.3 0a5.2 5.2 0 1 0 -10.3 0M450.0 220.2Q456.0 209.6 468.0 212.8Q461.8 223.5 450.0 220.2M452.2 219.3Q457.1 211.8 465.5 213.8Q461.0 221.2 452.2 219.3M452.7 219.1L464.8 214.1M453.7 217.0L456.4 217.6L454.9 219.9M455.7 215.6L458.7 216.6L457.3 219.5M457.9 214.6L460.9 215.7L459.6 218.6M460.4 214.2L463.1 214.8L461.6 217.1M451.2 224.9Q461.7 216.0 473.7 223.2Q463.0 232.1 451.2 224.9M453.9 224.7Q462.1 218.6 470.5 223.4Q462.9 229.4 453.9 224.7M454.5 224.6L469.6 223.5M456.6 222.8L459.0 224.3L456.9 226.1M459.3 222.0L461.8 224.1L459.7 226.5M462.1 221.7L464.6 223.9L462.5 226.3M465.0 222.1L467.4 223.6L465.3 225.5M450.8 229.6Q464.0 224.5 473.5 235.2Q460.1 240.4 450.8 229.6M453.5 230.3Q463.5 227.1 470.3 234.5Q460.9 237.8 453.5 230.3M454.2 230.5L469.4 234.2M456.4 229.4L458.2 231.5L455.6 232.4M458.8 229.4L460.5 232.0L457.8 233.6M461.2 229.7L462.9 232.6L460.1 234.4M463.5 230.5L465.2 233.2L462.5 234.8M465.8 231.7L467.6 233.8L465.0 234.8M448.9 234.1Q461.6 232.9 466.3 244.9Q453.4 246.0 448.9 234.1M451.0 235.4Q460.4 235.1 463.9 243.4Q454.9 243.9 451.0 235.4M451.5 235.7L463.2 243.0M454.0 235.3L455.0 237.9L452.3 238.0M456.4 236.2L457.2 239.2L454.1 239.9M458.6 237.5L459.4 240.6L456.2 241.3M460.5 239.4L461.5 241.9L458.7 242.1M445.7 237.7Q457.7 240.2 458.2 252.6Q446.1 249.9 445.7 237.7M447.2 239.5Q455.9 241.9 456.5 250.5Q448.1 248.4 447.2 239.5M447.6 239.9L456.0 249.9M449.9 240.2L450.2 243.0L447.5 242.3M451.9 241.7L451.7 244.8L448.6 244.4M453.5 243.5L453.3 246.7L450.1 246.3M454.6 245.8L454.8 248.6L452.2 247.8M441.6 240.1Q452.7 246.8 449.4 259.5Q438.2 252.6 441.6 240.1M442.6 242.5Q450.4 247.9 448.3 256.8Q440.6 251.8 442.6 242.5M442.8 243.0L448.0 256.0M445.0 244.3L444.3 247.0L442.0 245.4M446.5 246.4L445.3 249.4L442.4 248.0M447.5 248.8L446.3 251.8L443.3 250.5M447.9 251.5L447.2 254.2L444.9 252.7M442.4 231.0a1.6 1.6 0 1 0 3.2 0a1.6 1.6 0 1 0 -3.2 0M441.3 231.0a2.7 2.7 0 1 0 5.4 0a2.7 2.7 0 1 0 -5.4 0M446.8 232.1a2.7 2.7 0 1 0 5.4 0a2.7 2.7 0 1 0 -5.4 0M447.9 232.1a1.5 1.5 0 1 0 3.1 0a1.5 1.5 0 1 0 -3.1 0M446.6 231.5L448.0 231.8M443.8 236.0a2.7 2.7 0 1 0 5.4 0a2.7 2.7 0 1 0 -5.4 0M445.0 236.0a1.5 1.5 0 1 0 3.1 0a1.5 1.5 0 1 0 -3.1 0M445.2 233.4L445.8 234.6M439.0 236.1a2.7 2.7 0 1 0 5.4 0a2.7 2.7 0 1 0 -5.4 0M440.2 236.1a1.5 1.5 0 1 0 3.1 0a1.5 1.5 0 1 0 -3.1 0M442.9 233.5L442.3 234.7M435.9 232.4a2.7 2.7 0 1 0 5.4 0a2.7 2.7 0 1 0 -5.4 0M437.1 232.4a1.5 1.5 0 1 0 3.1 0a1.5 1.5 0 1 0 -3.1 0M441.4 231.7L440.1 232.0M436.9 227.6a2.7 2.7 0 1 0 5.4 0a2.7 2.7 0 1 0 -5.4 0M438.0 227.6a1.5 1.5 0 1 0 3.1 0a1.5 1.5 0 1 0 -3.1 0M441.8 229.4L440.8 228.6M441.2 225.4a2.7 2.7 0 1 0 5.4 0a2.7 2.7 0 1 0 -5.4 0M442.3 225.4a1.5 1.5 0 1 0 3.1 0a1.5 1.5 0 1 0 -3.1 0M443.9 228.3L443.9 227.0M445.6 227.4a2.7 2.7 0 1 0 5.4 0a2.7 2.7 0 1 0 -5.4 0M446.7 227.4a1.5 1.5 0 1 0 3.1 0a1.5 1.5 0 1 0 -3.1 0M446.1 229.3L447.1 228.4M452.4 232.7Q452.6 234.9 450.8 236.2M450.8 236.2Q450.1 238.2 447.9 238.6M447.9 238.6Q446.3 240.2 444.2 239.5M444.2 239.5Q442.1 240.3 440.5 238.8M440.5 238.8Q438.3 238.5 437.4 236.5M437.4 236.5Q435.6 235.3 435.7 233.1M435.7 233.1Q434.6 231.2 435.6 229.3M435.6 229.3Q435.4 227.1 437.2 225.8M437.2 225.8Q437.9 223.8 440.1 223.4M440.1 223.4Q441.7 221.8 443.8 222.5M443.8 222.5Q445.9 221.7 447.5 223.2M447.5 223.2Q449.7 223.5 450.6 225.5M450.6 225.5Q452.4 226.7 452.3 228.9M452.3 228.9Q453.4 230.8 452.4 232.7M448.5 122.1Q461.9 114.7 471.7 127.6Q457.2 134.8 448.5 122.1M451.3 122.8Q461.5 118.0 468.4 126.8Q458.3 131.6 451.3 122.8M452.0 122.9L467.5 126.6M445.9 128.1Q460.4 125.7 464.6 140.7Q449.1 142.4 445.9 128.1M448.2 129.6Q458.9 128.6 462.0 138.9Q451.3 139.9 448.2 129.6M448.7 130.0L461.2 138.4M441.4 132.7Q454.1 134.4 452.2 148.0Q438.7 145.2 441.4 132.7M442.7 134.5Q451.8 136.5 450.7 145.9Q441.4 143.8 442.7 134.5M443.0 135.0L450.2 145.2M435.5 135.4Q447.0 141.8 440.3 154.3Q428.5 146.6 435.5 135.4M436.1 137.7Q444.1 143.0 439.7 151.7Q431.6 146.3 436.1 137.7M436.2 138.3L439.5 150.9M533.2 115.8Q545.5 113.4 551.2 125.2Q538.3 127.3 533.2 115.8M535.3 116.9Q544.6 115.8 548.7 123.9Q539.7 125.2 535.3 116.9M535.9 117.2L548.0 123.5M538.3 116.7L539.5 119.1L536.8 119.5M540.7 117.3L541.8 120.3L538.7 121.2M543.0 118.4L544.0 121.5L540.9 122.4M545.0 120.1L546.3 122.6L543.5 123.1M530.4 119.4Q542.7 121.4 543.8 134.4Q531.1 131.9 530.4 119.4M532.0 121.2Q541.0 123.3 542.0 132.3Q533.2 130.3 532.0 121.2M532.4 121.6L541.4 131.7M534.8 121.9L535.2 124.7L532.5 124.0M536.9 123.4L536.8 126.5L533.7 126.3M538.6 125.2L538.5 128.4L535.3 128.2M539.9 127.5L540.2 130.3L537.4 129.7M526.6 121.7Q538.8 129.7 535.3 144.2Q522.9 135.8 526.6 121.7M527.6 124.4Q536.3 130.9 534.1 141.1Q525.6 135.0 527.6 124.4M527.9 125.1L533.7 140.2M530.0 126.4L529.4 129.0L527.1 127.5M531.5 128.4L530.3 131.4L527.4 130.0M532.7 130.6L531.2 133.7L528.0 132.4M533.5 133.0L532.1 136.0L529.1 134.7M533.8 135.6L533.0 138.3L530.6 136.8M522.1 122.6Q530.2 132.6 522.4 143.4Q514.3 132.8 522.1 122.6M522.2 125.1Q527.6 132.9 522.3 140.5Q516.9 133.0 522.2 125.1M522.2 125.7L522.3 139.6M523.8 127.6L522.2 129.9L520.6 127.7M524.4 130.1L522.2 132.5L520.0 130.2M524.5 132.7L522.3 135.1L520.0 132.8M524.0 135.4L522.3 137.6L520.6 135.4M517.7 121.8Q521.7 135.1 509.9 143.3Q506.1 129.5 517.7 121.8M516.8 124.4Q519.0 134.4 511.0 140.3Q508.5 130.6 516.8 124.4M516.5 125.1L511.3 139.4M517.3 127.2L515.1 128.9L514.5 126.2M517.1 129.6L514.3 131.1L513.1 128.2M516.6 131.9L513.5 133.3L512.0 130.3M515.6 134.1L512.7 135.5L511.4 132.6M514.2 136.2L511.9 137.7L511.2 135.1M440.4 254.8L440.0 254.7L439.6 254.5L439.3 254.1L439.2 253.5L439.2 252.9L439.4 252.3L439.9 251.7L440.6 251.2L441.5 251.0L442.4 251.1L443.4 251.5L444.2 252.2L444.8 253.1L445.1 254.3L445.0 255.6L444.6 256.8L443.7 257.9L442.5 258.8L441.1 259.2L439.5 259.2L437.9 258.7L436.5 257.8L435.4 256.4L434.7 254.7L434.6 252.7L435.0 250.8L436.1 249.0L437.6 247.6L439.6 246.7L441.8 246.4L444.1 246.7L446.2 247.8L448.0 249.5L449.2 251.6L449.8 254.2L449.6 256.8M438.1 253.2L438.1 252.5L438.3 251.8L438.6 251.1L439.2 250.4L439.9 249.9L440.7 249.5L441.7 249.3L442.8 249.3L443.8 249.6L444.9 250.1L445.8 250.9L446.6 251.8L447.2 253.0L447.5 254.3L447.5 255.7L447.2 257.2L446.6 258.5L445.7 259.8L444.5 260.9L443.1 261.7L441.5 262.2L439.7 262.4L437.9 262.2L436.1 261.6L434.5 260.6L433.1 259.2L431.9 257.5L431.1 255.6L430.8 253.5L430.8 251.3L431.4 249.2L432.4 247.1L433.9 245.3L435.7 243.8L437.9 242.7L440.3 242.0M449.7 256.2Q452.7 251.4 455.1 257.6Q450.1 261.9 449.7 256.2M450.4 256.4Q452.9 253.2 454.3 257.4Q451.0 260.4 450.4 256.4M450.5 256.4L454.1 257.3M447.6 260.1Q452.2 257.3 451.2 263.5Q445.1 265.0 447.6 260.1M448.0 260.5Q451.5 258.9 450.7 263.0Q446.6 264.2 448.0 260.5M448.1 260.6L450.5 262.9M443.8 262.5Q449.8 262.7 445.8 268.4Q439.2 266.2 443.8 262.5M444.1 263.2Q448.3 263.8 445.5 267.6Q441.0 266.2 444.1 263.2M444.1 263.4L445.4 267.3M439.4 262.9Q444.3 265.2 438.5 267.6Q434.0 263.3 439.4 262.9M439.3 263.4Q442.6 265.4 438.7 266.9Q435.5 264.1 439.3 263.4M439.3 263.6L438.7 266.7M428.8 151.7L433.2 148.3M430.7 154.0L434.9 150.4M433.3 157.0L437.6 153.6M435.8 160.5L440.4 157.6M437.4 163.9L442.6 162.1M438.3 167.8L443.7 167.0M438.8 172.4L444.2 172.2M438.8 177.2L444.2 177.5M438.3 181.5L443.7 182.5M437.1 185.1L442.1 187.4M435.1 188.8L439.8 191.6M432.8 192.9L437.8 195.2M431.3 197.5L436.7 198.5M430.9 202.2L436.4 202.2M431.2 206.8L436.7 206.2M432.1 211.3L437.4 209.8M433.6 215.3L438.4 212.7M436.3 218.8L440.1 214.7M439.6 221.3L442.6 216.7M442.6 223.1L445.4 218.4M444.5 224.3L447.5 219.7M429.0 233.0L433.0 231.0M430.1 235.2L434.1 233.0M431.7 238.1L435.8 236.1M433.1 241.3L437.4 239.8M433.8 244.1L438.2 243.9M433.4 246.9L437.7 248.0M432.3 250.4L436.5 252.0M430.9 254.0L435.1 255.6M429.8 257.5L434.2 258.5M429.3 260.5L433.7 261.1M429.0 263.2L433.5 263.6M428.9 265.4L433.4 265.6M428.8 266.8L433.2 267.2M453.1 122.6L456.9 119.4M454.7 124.4L458.4 121.1M456.8 126.8L460.7 123.7M458.7 129.4L463.0 126.9M459.5 131.4L464.5 130.6M459.5 133.6L464.4 134.3M458.8 136.4L463.5 138.0M457.5 139.1L462.0 141.5M456.1 141.4L459.9 144.6M454.1 143.3L457.3 147.2M451.5 145.1L454.1 149.4M448.7 146.6L450.8 151.1M446.2 147.6L447.8 152.4M444.2 148.0L444.6 153.0M442.0 147.9L441.6 152.9M439.9 147.7L439.2 152.6M438.2 147.5L437.8 152.5M580.0 136.5Q582.0 133.6 586.3 135.7Q582.6 138.8 580.0 136.5M574.1 141.9Q575.8 138.7 580.6 140.4Q577.1 144.0 574.1 141.9M568.1 147.1Q570.3 142.7 576.7 144.7Q572.3 149.8 568.1 147.1M560.0 148.3Q562.7 145.6 566.9 148.7Q562.3 151.3 560.0 148.3M552.0 150.5Q554.8 148.1 558.6 151.3Q554.1 153.5 552.0 150.5M544.1 151.2Q546.5 147.2 552.5 149.7Q547.8 154.1 544.1 151.2M536.0 150.2Q538.1 147.5 542.3 149.9Q538.4 152.7 536.0 150.2M530.0 147.6Q532.7 145.1 536.6 148.3Q532.1 150.6 530.0 147.6M524.3 147.5Q525.8 143.2 532.0 144.4Q528.4 149.6 524.3 147.5M522.1 153.9Q523.9 150.6 528.8 152.3Q525.2 156.1 522.1 153.9M520.1 161.0Q521.7 157.9 526.2 159.4Q523.0 162.9 520.1 161.0M519.6 168.1Q522.6 166.0 526.2 169.6Q521.4 171.4 519.6 168.1M519.3 176.5Q522.8 174.7 525.9 179.2Q520.6 180.2 519.3 176.5M516.8 182.4Q521.3 180.3 525.0 186.0Q518.3 187.0 516.8 182.4M514.6 187.9Q518.6 186.7 521.2 191.9Q515.3 192.1 514.6 187.9M509.6 191.8Q513.2 192.1 513.6 197.0Q508.9 195.4 509.6 191.8M502.8 197.6Q507.5 196.6 509.8 202.8Q503.2 202.4 502.8 197.6M497.5 199.8Q501.0 201.0 500.1 206.0Q495.8 203.1 497.5 199.8M489.7 203.8Q494.2 204.2 494.5 210.4Q488.6 208.2 489.7 203.8M485.8 204.5Q488.6 206.7 486.1 211.1Q483.2 207.0 485.8 204.5M480.3 206.0Q483.6 209.4 479.7 214.6Q476.5 208.9 480.3 206.0M476.3 210.0Q479.4 212.5 476.7 217.3Q473.4 212.8 476.3 210.0M471.9 214.2Q474.9 215.6 473.6 220.0Q470.1 217.0 471.9 214.2M473.4 221.1Q475.6 224.1 471.9 227.6Q470.2 222.8 473.4 221.1M472.4 228.0Q474.9 230.7 471.7 234.8Q469.4 230.2 472.4 228.0M471.2 233.6Q473.9 236.9 469.8 241.2Q467.6 235.7 471.2 233.6M468.6 239.0Q471.5 241.1 469.3 245.5Q466.1 241.7 468.6 239.0M465.8 243.6Q467.8 246.3 464.6 249.7Q462.8 245.3 465.8 243.6M460.7 248.0Q464.1 250.6 461.2 255.7Q457.8 251.0 460.7 248.0M457.4 251.8Q459.4 255.6 454.7 259.1Q453.4 253.3 457.4 251.8M451.2 255.0Q454.7 258.4 450.7 263.7Q447.4 258.0 451.2 255.0M446.2 258.5Q448.6 260.8 445.9 264.5Q443.6 260.6 446.2 258.5M441.5 262.0Q444.2 265.1 440.6 269.3Q438.2 264.3 441.5 262.0M436.2 264.0Q438.8 266.5 435.9 270.5Q433.4 266.3 436.2 264.0" style="stroke-width:var(--w1)"/><path d="M428.8 151.7L429.6 152.7L430.7 154.0L432.0 155.4L433.3 157.0L434.6 158.7L435.8 160.5L436.7 162.2L437.4 163.9L437.9 165.7L438.3 167.8L438.6 170.1L438.8 172.4L438.8 174.8L438.8 177.2L438.6 179.4L438.3 181.5L437.8 183.3L437.1 185.1L436.1 186.9L435.1 188.8L433.9 190.8L432.8 192.9L431.9 195.2L431.3 197.5L431.0 199.8L430.9 202.2L431.0 204.5L431.2 206.8L431.6 209.1L432.1 211.3L432.7 213.3L433.6 215.3L434.8 217.1L436.3 218.8L437.9 220.1L439.6 221.3L441.2 222.3L442.6 223.1L443.7 223.8L444.5 224.3M433.2 148.3L433.9 149.2L434.9 150.4L436.2 151.9L437.6 153.6L439.0 155.5L440.4 157.6L441.7 159.8L442.6 162.1L443.2 164.5L443.7 167.0L444.0 169.5L444.2 172.2L444.3 174.8L444.2 177.5L444.0 180.0L443.7 182.5L443.1 185.0L442.1 187.4L441.0 189.5L439.8 191.6L438.7 193.5L437.8 195.2L437.1 196.9L436.7 198.5L436.5 200.3L436.4 202.2L436.5 204.2L436.7 206.2L437.0 208.1L437.4 209.8L437.9 211.4L438.4 212.7L439.1 213.7L440.1 214.7L441.3 215.8L442.6 216.7L444.1 217.6L445.4 218.4L446.6 219.1L447.5 219.7M429.0 233.0L429.5 234.0L430.1 235.2L430.9 236.6L431.7 238.1L432.5 239.7L433.1 241.3L433.6 242.8L433.8 244.1L433.7 245.4L433.4 246.9L432.9 248.6L432.3 250.4L431.6 252.2L430.9 254.0L430.3 255.8L429.8 257.5L429.5 259.0L429.3 260.5L429.1 261.9L429.0 263.2L428.9 264.4L428.9 265.4L428.8 266.2L428.8 266.8M433.0 231.0L433.4 231.9L434.1 233.0L434.9 234.5L435.8 236.1L436.6 237.9L437.4 239.8L438.0 241.9L438.2 243.9L438.1 246.0L437.7 248.0L437.2 250.0L436.5 252.0L435.8 253.8L435.1 255.6L434.6 257.1L434.2 258.5L433.9 259.8L433.7 261.1L433.6 262.4L433.5 263.6L433.4 264.7L433.4 265.6L433.3 266.5L433.2 267.2M453.1 122.6L453.7 123.4L454.7 124.4L455.7 125.6L456.8 126.8L457.9 128.1L458.7 129.4L459.3 130.5L459.5 131.4L459.6 132.4L459.5 133.6L459.2 135.0L458.8 136.4L458.2 137.8L457.5 139.1L456.8 140.4L456.1 141.4L455.2 142.4L454.1 143.3L452.9 144.2L451.5 145.1L450.1 145.9L448.7 146.6L447.4 147.2L446.2 147.6L445.3 147.9L444.2 148.0L443.1 148.0L442.0 147.9L440.9 147.8L439.9 147.7L438.9 147.6L438.2 147.5M456.9 119.4L457.5 120.1L458.4 121.1L459.5 122.3L460.7 123.7L461.9 125.2L463.0 126.9L463.9 128.7L464.5 130.6L464.6 132.5L464.4 134.3L464.0 136.2L463.5 138.0L462.8 139.8L462.0 141.5L461.0 143.1L459.9 144.6L458.7 145.9L457.3 147.2L455.7 148.4L454.1 149.4L452.5 150.3L450.8 151.1L449.3 151.8L447.8 152.4L446.2 152.8L444.6 153.0L443.0 153.0L441.6 152.9L440.3 152.8L439.2 152.6L438.4 152.5L437.8 152.5M432 176C445 190 452 200 444 212M500 117C508 124 512 134 506 142" style="stroke-width:var(--w4)"/><path d="M560.7 129.0a4.3 4.3 0 1 0 8.6 0a4.3 4.3 0 1 0 -8.6 0M557.8 129.0a7.2 7.2 0 1 0 14.4 0a7.2 7.2 0 1 0 -14.4 0M572.4 132.0a7.2 7.2 0 1 0 14.4 0a7.2 7.2 0 1 0 -14.4 0M575.5 132.0a4.1 4.1 0 1 0 8.2 0a4.1 4.1 0 1 0 -8.2 0M572.1 130.4L575.6 131.1M567.1 140.6a7.2 7.2 0 1 0 14.4 0a7.2 7.2 0 1 0 -14.4 0M570.2 140.6a4.1 4.1 0 1 0 8.2 0a4.1 4.1 0 1 0 -8.2 0M569.5 134.6L571.7 137.4M557.4 143.9a7.2 7.2 0 1 0 14.4 0a7.2 7.2 0 1 0 -14.4 0M560.5 143.9a4.1 4.1 0 1 0 8.2 0a4.1 4.1 0 1 0 -8.2 0M564.8 136.2L564.7 139.8M547.9 140.2a7.2 7.2 0 1 0 14.4 0a7.2 7.2 0 1 0 -14.4 0M551.1 140.2a4.1 4.1 0 1 0 8.2 0a4.1 4.1 0 1 0 -8.2 0M560.2 134.4L557.8 137.1M543.1 131.2a7.2 7.2 0 1 0 14.4 0a7.2 7.2 0 1 0 -14.4 0M546.2 131.2a4.1 4.1 0 1 0 8.2 0a4.1 4.1 0 1 0 -8.2 0M557.9 130.1L554.3 130.6M545.1 121.2a7.2 7.2 0 1 0 14.4 0a7.2 7.2 0 1 0 -14.4 0M548.2 121.2a4.1 4.1 0 1 0 8.2 0a4.1 4.1 0 1 0 -8.2 0M558.9 125.2L555.8 123.4M553.1 114.9a7.2 7.2 0 1 0 14.4 0a7.2 7.2 0 1 0 -14.4 0M556.2 114.9a4.1 4.1 0 1 0 8.2 0a4.1 4.1 0 1 0 -8.2 0M562.7 122.2L561.6 118.8M563.2 115.2a7.2 7.2 0 1 0 14.4 0a7.2 7.2 0 1 0 -14.4 0M566.4 115.2a4.1 4.1 0 1 0 8.2 0a4.1 4.1 0 1 0 -8.2 0M567.6 122.3L569.0 118.9M570.9 121.9a7.2 7.2 0 1 0 14.4 0a7.2 7.2 0 1 0 -14.4 0M574.0 121.9a4.1 4.1 0 1 0 8.2 0a4.1 4.1 0 1 0 -8.2 0M571.3 125.6L574.5 123.8M587.3 133.5Q588.5 138.2 584.4 140.9M584.4 140.9Q583.9 145.7 579.2 146.8M579.2 146.8Q577.0 151.1 572.2 150.6M572.2 150.6Q568.7 153.9 564.4 151.8M564.4 151.8Q560.0 153.7 556.7 150.2M556.7 150.2Q551.8 150.5 549.9 146.1M549.9 146.1Q545.3 144.7 545.0 139.9M545.0 139.9Q541.1 137.0 542.5 132.4M542.5 132.4Q539.8 128.4 542.7 124.5M542.7 124.5Q541.5 119.8 545.6 117.1M545.6 117.1Q546.1 112.3 550.8 111.2M550.8 111.2Q553.0 106.9 557.8 107.4M557.8 107.4Q561.3 104.1 565.6 106.2M565.6 106.2Q570.0 104.3 573.3 107.8M573.3 107.8Q578.2 107.5 580.1 111.9M580.1 111.9Q584.7 113.3 585.0 118.1M585.0 118.1Q588.9 121.0 587.5 125.6M587.5 125.6Q590.2 129.6 587.3 133.5M538.4 140.0a1.6 1.6 0 1 0 3.2 0a1.6 1.6 0 1 0 -3.2 0M537.3 140.0a2.7 2.7 0 1 0 5.4 0a2.7 2.7 0 1 0 -5.4 0M542.9 140.6a2.7 2.7 0 1 0 5.4 0a2.7 2.7 0 1 0 -5.4 0M544.0 140.6a1.5 1.5 0 1 0 3.1 0a1.5 1.5 0 1 0 -3.1 0M542.7 140.3L544.0 140.4M540.3 144.7a2.7 2.7 0 1 0 5.4 0a2.7 2.7 0 1 0 -5.4 0M541.5 144.7a1.5 1.5 0 1 0 3.1 0a1.5 1.5 0 1 0 -3.1 0M541.5 142.3L542.2 143.4M535.5 145.3a2.7 2.7 0 1 0 5.4 0a2.7 2.7 0 1 0 -5.4 0M536.7 145.3a1.5 1.5 0 1 0 3.1 0a1.5 1.5 0 1 0 -3.1 0M539.1 142.6L538.7 143.8M532.1 141.9a2.7 2.7 0 1 0 5.4 0a2.7 2.7 0 1 0 -5.4 0M533.2 141.9a1.5 1.5 0 1 0 3.1 0a1.5 1.5 0 1 0 -3.1 0M537.5 140.9L536.2 141.4M532.5 137.1a2.7 2.7 0 1 0 5.4 0a2.7 2.7 0 1 0 -5.4 0M533.7 137.1a1.5 1.5 0 1 0 3.1 0a1.5 1.5 0 1 0 -3.1 0M537.7 138.6L536.5 137.9M536.6 134.5a2.7 2.7 0 1 0 5.4 0a2.7 2.7 0 1 0 -5.4 0M537.8 134.5a1.5 1.5 0 1 0 3.1 0a1.5 1.5 0 1 0 -3.1 0M539.7 137.3L539.5 136.0M541.2 136.0a2.7 2.7 0 1 0 5.4 0a2.7 2.7 0 1 0 -5.4 0M542.4 136.0a1.5 1.5 0 1 0 3.1 0a1.5 1.5 0 1 0 -3.1 0M541.9 138.1L542.8 137.1M548.5 140.9Q549.0 143.0 547.3 144.5M547.3 144.5Q546.8 146.6 544.6 147.2M544.6 147.2Q543.2 148.9 541.1 148.5M541.1 148.5Q539.1 149.4 537.3 148.1M537.3 148.1Q535.1 148.1 534.0 146.1M534.0 146.1Q532.1 145.1 532.0 142.9M532.0 142.9Q530.6 141.2 531.5 139.1M531.5 139.1Q531.0 137.0 532.7 135.5M532.7 135.5Q533.2 133.4 535.4 132.8M535.4 132.8Q536.8 131.1 538.9 131.5M538.9 131.5Q540.9 130.6 542.7 131.9M542.7 131.9Q544.9 131.9 546.0 133.9M546.0 133.9Q547.9 134.9 548.0 137.1M548.0 137.1Q549.4 138.8 548.5 140.9M586.6 118.0a1.4 1.4 0 1 0 2.9 0a1.4 1.4 0 1 0 -2.9 0M585.6 118.0a2.4 2.4 0 1 0 4.8 0a2.4 2.4 0 1 0 -4.8 0M590.2 119.9a2.4 2.4 0 1 0 4.8 0a2.4 2.4 0 1 0 -4.8 0M591.2 119.9a1.4 1.4 0 1 0 2.7 0a1.4 1.4 0 1 0 -2.7 0M590.2 118.9L591.3 119.4M586.9 122.8a2.4 2.4 0 1 0 4.8 0a2.4 2.4 0 1 0 -4.8 0M588.0 122.8a1.4 1.4 0 1 0 2.7 0a1.4 1.4 0 1 0 -2.7 0M588.6 120.3L589.0 121.5M582.7 122.0a2.4 2.4 0 1 0 4.8 0a2.4 2.4 0 1 0 -4.8 0M583.7 122.0a1.4 1.4 0 1 0 2.7 0a1.4 1.4 0 1 0 -2.7 0M586.6 119.9L585.9 120.9M580.6 118.2a2.4 2.4 0 1 0 4.8 0a2.4 2.4 0 1 0 -4.8 0M581.7 118.2a1.4 1.4 0 1 0 2.7 0a1.4 1.4 0 1 0 -2.7 0M585.6 118.1L584.4 118.2M582.3 114.3a2.4 2.4 0 1 0 4.8 0a2.4 2.4 0 1 0 -4.8 0M583.4 114.3a1.4 1.4 0 1 0 2.7 0a1.4 1.4 0 1 0 -2.7 0M586.4 116.2L585.6 115.3M586.5 113.1a2.4 2.4 0 1 0 4.8 0a2.4 2.4 0 1 0 -4.8 0M587.5 113.1a1.4 1.4 0 1 0 2.7 0a1.4 1.4 0 1 0 -2.7 0M588.4 115.6L588.6 114.5M590.0 115.6a2.4 2.4 0 1 0 4.8 0a2.4 2.4 0 1 0 -4.8 0M591.0 115.6a1.4 1.4 0 1 0 2.7 0a1.4 1.4 0 1 0 -2.7 0M590.1 116.9L591.2 116.3M595.0 121.0Q594.8 122.9 593.0 123.7M593.0 123.7Q592.0 125.4 590.1 125.3M590.1 125.3Q588.4 126.4 586.7 125.5M586.7 125.5Q584.7 125.7 583.6 124.2M583.6 124.2Q581.7 123.6 581.3 121.6M581.3 121.6Q579.9 120.3 580.4 118.4M580.4 118.4Q579.7 116.5 581.0 115.0M581.0 115.0Q581.2 113.1 583.0 112.3M583.0 112.3Q584.0 110.6 585.9 110.7M585.9 110.7Q587.6 109.6 589.3 110.5M589.3 110.5Q591.3 110.3 592.4 111.8M592.4 111.8Q594.3 112.4 594.7 114.4M594.7 114.4Q596.1 115.7 595.6 117.6M595.6 117.6Q596.3 119.5 595.0 121.0" style="stroke-width:var(--w3)" opacity="0.85"/></g><g id="lace4"><use href="#lacec"/><use href="#lacec" transform="translate(1253,0) scale(-1,1)"/><use href="#lacec" transform="translate(0,779.8) scale(1,-1)"/><use href="#lacec" transform="translate(1253,779.8) scale(-1,-1)"/></g></defs><use href="#lace4"/><path d="M571 226C580 220 592 215 604 212M615.9 210.9Q619.3 207.4 622.6 212.8Q616.9 215.6 615.9 210.9M616.7 211.1Q619.6 208.9 621.6 212.6Q617.9 214.6 616.7 211.1M616.9 211.2L621.4 212.5M614.2 212.8Q618.9 213.2 616.8 219.0Q611.2 216.5 614.2 212.8M614.5 213.5Q618.0 214.3 616.5 218.1Q612.6 216.6 614.5 213.5M614.6 213.7L616.3 217.9M611.4 212.5Q613.9 217.0 607.5 218.8Q606.3 212.3 611.4 212.5M611.0 213.3Q612.4 216.9 608.1 217.9Q607.1 213.6 611.0 213.3M610.8 213.5L608.2 217.7M610.0 210.4Q608.3 215.0 603.0 211.4Q607.1 206.4 610.0 210.4M609.2 210.5Q607.4 213.8 604.0 211.2Q606.6 207.8 609.2 210.5M609.0 210.6L604.3 211.2M610.8 207.9Q606.4 209.5 606.1 203.5Q612.1 203.5 610.8 207.9M610.2 207.4Q606.8 208.1 606.7 204.1Q610.8 204.0 610.2 207.4M610.1 207.3L606.9 204.3M613.1 207.0Q609.1 204.8 613.4 200.6Q617.3 205.1 613.1 207.0M613.1 206.2Q610.4 204.2 613.3 201.5Q616.1 204.4 613.1 206.2M613.2 206.0L613.3 201.7M615.5 208.4Q615.2 203.5 621.5 204.6Q619.9 210.8 615.5 208.4M616.3 207.9Q616.5 204.2 620.7 205.1Q619.7 209.3 616.3 207.9M616.4 207.8L620.5 205.3M613.8 210.5Q616.5 209.6 617.8 213.0Q614.1 213.4 613.8 210.5M614.3 210.8Q616.4 210.4 617.2 212.7Q614.8 213.0 614.3 210.8M614.4 210.9L617.1 212.6M612.8 211.0Q614.6 213.3 611.7 215.8Q610.1 212.3 612.8 211.0M612.6 211.6Q613.8 213.5 611.8 215.1Q610.7 212.8 612.6 211.6M612.6 211.7L611.9 214.9M612.0 210.1Q610.3 212.5 607.2 210.5Q610.0 207.9 612.0 210.1M611.4 210.1Q610.0 211.8 607.9 210.4Q609.7 208.7 611.4 210.1M611.3 210.1L608.1 210.4M612.6 209.1Q609.9 208.2 610.9 204.7Q614.1 206.6 612.6 209.1M612.4 208.5Q610.4 207.7 611.2 205.3Q613.3 206.5 612.4 208.5M612.4 208.4L611.2 205.5M613.7 209.3Q613.6 206.3 617.6 206.0Q616.8 209.8 613.7 209.3M614.2 208.9Q614.4 206.6 617.0 206.4Q616.6 209.1 614.2 208.9M614.3 208.8L616.9 206.6M612.4 210.0a0.6 0.6 0 1 0 1.2 0a0.6 0.6 0 1 0 -1.2 0M611.9 210.0a1.1 1.1 0 1 0 2.2 0a1.1 1.1 0 1 0 -2.2 0M620.7 219.0Q623.8 218.6 623.6 222.9Q619.5 221.9 620.7 219.0M621.1 219.4Q623.5 219.5 623.2 222.3Q620.4 221.7 621.1 219.4M621.2 219.6L623.1 222.2M619.5 219.1Q621.4 221.6 617.7 223.7Q616.4 219.6 619.5 219.1M619.3 219.7Q620.5 221.8 617.9 223.0Q617.0 220.3 619.3 219.7M619.3 219.8L618.0 222.8M618.8 218.1Q617.6 220.9 614.2 218.7Q617.0 215.7 618.8 218.1M618.3 218.2Q617.1 220.2 614.8 218.6Q616.6 216.6 618.3 218.2M618.1 218.2L615.0 218.6M619.3 217.0Q616.1 217.4 616.2 213.1Q620.4 214.1 619.3 217.0M618.9 216.6Q616.5 216.5 616.7 213.7Q619.5 214.2 618.9 216.6M618.8 216.5L616.8 213.8M620.5 216.9Q618.7 214.5 622.3 212.6Q623.5 216.5 620.5 216.9M620.7 216.4Q619.6 214.4 622.1 213.2Q622.9 215.8 620.7 216.4M620.8 216.3L622.0 213.4M621.2 217.9Q622.5 215.0 626.1 217.2Q623.1 220.3 621.2 217.9M621.8 217.8Q623.0 215.7 625.4 217.3Q623.5 219.5 621.8 217.8M621.9 217.8L625.2 217.3M619.6 218.0a0.4 0.4 0 1 0 0.7 0a0.4 0.4 0 1 0 -0.7 0M619.3 218.0a0.7 0.7 0 1 0 1.3 0a0.7 0.7 0 1 0 -1.3 0M670.3 226.3Q673.3 221.9 678.0 227.2Q672.3 231.3 670.3 226.3M671.2 226.4Q673.9 223.4 676.9 227.1Q673.2 230.0 671.2 226.4M671.4 226.5L676.6 227.0M668.8 228.8Q674.2 228.3 673.0 235.2Q666.3 233.5 668.8 228.8M669.3 229.5Q673.4 229.7 672.5 234.3Q667.9 233.3 669.3 229.5M669.4 229.7L672.3 234.0M665.9 229.1Q669.5 232.8 663.6 235.9Q660.9 229.8 665.9 229.1M665.6 229.9Q667.9 233.0 663.9 234.9Q662.0 230.9 665.6 229.9M665.6 230.1L664.0 234.6M663.9 227.1Q662.9 232.6 656.2 229.8Q659.7 223.4 663.9 227.1M663.0 227.4Q661.7 231.4 657.3 229.4Q659.5 225.1 663.0 227.4M662.7 227.5L657.6 229.3M664.2 224.2Q659.4 226.8 657.7 219.9Q664.7 218.8 664.2 224.2M663.5 223.7Q659.6 225.1 658.6 220.5Q663.2 219.6 663.5 223.7M663.3 223.6L658.9 220.7M666.6 222.7Q661.5 220.8 665.5 215.0Q671.0 219.5 666.6 222.7M666.4 221.8Q662.8 219.8 665.7 216.0Q669.4 219.0 666.4 221.8M666.4 221.6L665.7 216.4M669.3 223.7Q667.7 218.6 674.6 218.3Q674.4 225.2 669.3 223.7M670.0 223.0Q669.3 219.1 673.9 219.1Q673.9 223.7 670.0 223.0M670.1 222.9L673.7 219.3M668.0 226.4Q670.7 224.8 672.9 228.2Q669.0 229.4 668.0 226.4M668.6 226.6Q670.8 225.6 672.2 227.9Q669.6 228.8 668.6 226.6M668.8 226.7L672.0 227.9M667.0 227.1Q669.4 229.1 666.8 232.2Q664.4 229.0 667.0 227.1M666.9 227.7Q668.6 229.5 666.8 231.5Q665.2 229.3 666.9 227.7M666.9 227.9L666.8 231.3M665.9 226.3Q664.7 229.4 660.8 227.9Q663.2 224.4 665.9 226.3M665.3 226.5Q664.1 228.7 661.5 227.6Q663.1 225.3 665.3 226.5M665.2 226.5L661.7 227.6M666.3 225.1Q663.0 224.9 663.1 220.6Q667.2 221.8 666.3 225.1M666.0 224.6Q663.4 224.2 663.5 221.3Q666.3 222.0 666.0 224.6M665.9 224.4L663.6 221.4M667.7 225.1Q666.9 221.9 671.0 220.7Q671.0 225.0 667.7 225.1M668.1 224.6Q667.7 222.1 670.5 221.3Q670.6 224.2 668.1 224.6M668.2 224.5L670.4 221.5M666.3 226.0a0.7 0.7 0 1 0 1.3 0a0.7 0.7 0 1 0 -1.3 0M665.8 226.0a1.2 1.2 0 1 0 2.4 0a1.2 1.2 0 1 0 -2.4 0M674.9 219.8Q677.7 218.9 678.3 222.9Q674.3 222.7 674.9 219.8M675.3 220.2Q677.5 219.8 677.8 222.4Q675.1 222.4 675.3 220.2M675.4 220.3L677.7 222.3M673.8 220.2Q676.2 222.0 673.2 224.8Q671.1 221.3 673.8 220.2M673.8 220.7Q675.4 222.4 673.3 224.1Q671.8 221.9 673.8 220.7M673.7 220.9L673.3 223.9M672.9 219.4Q672.3 222.3 668.6 220.9Q670.6 217.4 672.9 219.4M672.3 219.6Q671.6 221.7 669.2 220.7Q670.5 218.3 672.3 219.6M672.2 219.6L669.3 220.6M673.1 218.3Q670.1 219.4 669.2 215.1Q673.5 215.1 673.1 218.3M672.6 217.9Q670.2 218.4 669.7 215.6Q672.6 215.4 672.6 217.9M672.5 217.8L669.9 215.7M674.2 217.8Q671.9 215.8 675.1 213.2Q677.1 216.8 674.2 217.8M674.3 217.3Q672.8 215.5 675.0 213.8Q676.4 216.2 674.3 217.3M674.4 217.1L675.0 214.0M675.1 218.6Q675.8 215.7 679.5 217.2Q677.4 220.6 675.1 218.6M675.7 218.5Q676.4 216.3 678.9 217.4Q677.6 219.7 675.7 218.5M675.8 218.4L678.8 217.4M673.6 219.0a0.4 0.4 0 1 0 0.7 0a0.4 0.4 0 1 0 -0.7 0M673.3 219.0a0.7 0.7 0 1 0 1.3 0a0.7 0.7 0 1 0 -1.3 0M606 212C612 216 618 220 624 222M655 222C660 225 664 227 668 228" stroke-width="0.5" stroke="#a64aa6" opacity="0.8"/></svg></div>
<div class="a" style="left:431.5px;top:121px;width:0px;height:420px;background:none;border-left:1px dotted #3a6fd0;"></div>
<div class="a" style="left:821.5px;top:121px;width:0px;height:420px;background:none;border-left:1px dotted #3a6fd0;"></div>
<div class="a" style="left:119px;top:541px;width:988px;height:12px;background:#e6e6e6;"></div>
<div class="sb" style="left:119px;top:541px;width:13px;height:12px"></div>
<svg style="left:123.5px;top:544px" width="4" height="6" viewBox="0 0 4 6"><path d="M4 0V6L0 3Z" fill="#555"/></svg>
<div class="sb" style="left:259px;top:541px;width:685px;height:12px"></div>
<div class="sb" style="left:1091.5px;top:541px;width:12.5px;height:12px"></div>
<svg style="left:1096.5px;top:544px" width="4" height="6" viewBox="0 0 4 6"><path d="M0 0V6L4 3Z" fill="#555"/></svg>
<div class="a" style="left:1104px;top:541px;width:10px;height:12px;background:#f1f1f1;"></div>
<div class="a" style="left:1107px;top:101px;width:7px;height:397.5px;background:#e6e6e6;"></div>
<div class="sb" style="left:1107px;top:498.5px;width:12px;height:12px"></div>
<div class="sb" style="left:1107px;top:513px;width:12px;height:12px"></div>
<div class="sb" style="left:1107px;top:527px;width:12px;height:12px"></div>
<svg style="left:1110.5px;top:502.5px" width="6" height="4" viewBox="0 0 6 4"><path d="M0 0H6L3.0 4Z" fill="#555"/></svg>
<svg style="left:1111.0px;top:515.75px" width="5" height="2.5" viewBox="0 0 5 2.5"><path d="M0 0H5L2.5 2.5Z" fill="#555"/></svg>
<div class="a" style="left:1111px;top:519px;width:5px;height:1px;background:#555;"></div>
<svg style="left:1111.0px;top:529.75px" width="5" height="2.5" viewBox="0 0 5 2.5"><path d="M0 0H5L2.5 2.5Z" fill="#555"/></svg>
<svg style="left:1111.0px;top:532.75px" width="5" height="2.5" viewBox="0 0 5 2.5"><path d="M0 0H5L2.5 2.5Z" fill="#555"/></svg>
<div class="a" style="left:856px;top:84px;width:258px;height:350px;background:#fff;border-left:1px solid #c6c6c6;border-bottom:1px solid #c6c6c6;box-sizing:border-box;z-index:3;"></div>
<div class="a" style="left:857px;top:84px;width:257px;height:18.4px;background:#e9e9e9;z-index:3;"></div>
<div class="a" style="left:857px;top:149px;width:257px;height:17.7px;background:#e9e9e9;z-index:3;"></div>
<div class="a" style="left:857px;top:303.6px;width:257px;height:17.6px;background:#e9e9e9;z-index:3;"></div>
<div class="a" style="left:857.5px;top:413px;width:256.5px;height:1px;background:#e2e2e2;z-index:3;"></div>
<div class="sw" style="left:860px;top:169.7px;background:#ececec;z-index:3"></div>
<div class="sw" style="left:924.3px;top:169.7px;background:#eaf5fb;z-index:3"></div>
<div class="sw" style="left:989.5px;top:169.7px;background:#fce9e9;z-index:3"></div>
<div class="sw" style="left:1054px;top:169.7px;background:#e5e5e5;z-index:3"></div>
<div class="sw" style="left:860px;top:215.8px;background:#c5c5c5;z-index:3"></div>
<div class="sw" style="left:924.3px;top:215.8px;background:#c0e2eb;z-index:3"></div>
<div class="sw" style="left:989.5px;top:215.8px;background:#f4babd;z-index:3"></div>
<div class="sw" style="left:1054px;top:215.8px;background:#b0b0b0;z-index:3"></div>
<div class="sw" style="left:860px;top:261.3px;background:#a0a0a0;z-index:3"></div>
<div class="sw" style="left:924.3px;top:261.3px;background:#96d0de;z-index:3"></div>
<div class="sw" style="left:989.5px;top:261.3px;background:#ee8e94;z-index:3"></div>
<div class="sw" style="left:1054px;top:261.3px;background:#7f7f7f;z-index:3"></div>
<div class="a" style="left:920.8px;top:367.7px;width:65px;height:45px;background:#c6c6c6;z-index:3;"></div>
<div class="sw" style="left:860px;top:324.9px;height:39.1px;background:linear-gradient(180deg,#3e3e3e 0%,#616161 5%,#818181 10%,#9d9d9d 15%,#b6b6b6 20%,#cbcbcb 25%,#dddddd 30%,#ebebeb 35%,#f6f6f6 40%,#fdfdfd 45%,#ffffff 50%,#fdfdfd 55%,#f7f7f7 60%,#eeeeee 65%,#e2e2e2 70%,#d3d3d3 75%,#c0c0c0 80%,#ababab 85%,#929292 90%,#777777 95%,#595959 100%);z-index:3"></div>
<div class="sw" style="left:860px;top:370.9px;height:39px;background:linear-gradient(90deg,#3e3e3e 0%,#616161 5%,#818181 10%,#9d9d9d 15%,#b6b6b6 20%,#cbcbcb 25%,#dddddd 30%,#ebebeb 35%,#f6f6f6 40%,#fdfdfd 45%,#ffffff 50%,#fdfdfd 55%,#f7f7f7 60%,#eeeeee 65%,#e2e2e2 70%,#d3d3d3 75%,#c0c0c0 80%,#ababab 85%,#929292 90%,#777777 95%,#595959 100%);z-index:3"></div>
<div class="sw" style="left:924.3px;top:324.9px;height:39.1px;background:linear-gradient(180deg,#2d9fbf 0%,#53b0cb 5%,#76c0d5 10%,#94cedf 15%,#afdbe7 20%,#c7e5ee 25%,#daeef4 30%,#eaf5f9 35%,#f5fafc 40%,#fcfefe 45%,#ffffff 50%,#fcfefe 55%,#f5fafc 60%,#eaf5f9 65%,#daeef4 70%,#c7e5ee 75%,#afdbe7 80%,#94cedf 85%,#76c0d5 90%,#53b0cb 95%,#2d9fbf 100%);z-index:3"></div>
<div class="sw" style="left:924.3px;top:370.9px;height:39px;background:linear-gradient(90deg,#2d9fbf 0%,#53b0cb 5%,#76c0d5 10%,#94cedf 15%,#afdbe7 20%,#c7e5ee 25%,#daeef4 30%,#eaf5f9 35%,#f5fafc 40%,#fcfefe 45%,#ffffff 50%,#fcfefe 55%,#f5fafc 60%,#eaf5f9 65%,#daeef4 70%,#c7e5ee 75%,#afdbe7 80%,#94cedf 85%,#76c0d5 90%,#53b0cb 95%,#2d9fbf 100%);z-index:3"></div>
<div class="sw" style="left:989.5px;top:324.9px;height:39.1px;background:linear-gradient(180deg,#da1f28 0%,#e1484f 5%,#e76c72 10%,#ec8d92 15%,#f1aaae 20%,#f5c3c5 25%,#f9d8d9 30%,#fbe8e9 35%,#fdf4f5 40%,#fffcfc 45%,#ffffff 50%,#fffcfc 55%,#fdf5f6 60%,#fbeaeb 65%,#f9dbdc 70%,#f5c8ca 75%,#f1b1b4 80%,#ec969a 85%,#e7787d 90%,#e1565c 95%,#da3038 100%);z-index:3"></div>
<div class="sw" style="left:989.5px;top:370.9px;height:39px;background:linear-gradient(90deg,#da1f28 0%,#e1484f 5%,#e76c72 10%,#ec8d92 15%,#f1aaae 20%,#f5c3c5 25%,#f9d8d9 30%,#fbe8e9 35%,#fdf4f5 40%,#fffcfc 45%,#ffffff 50%,#fffcfc 55%,#fdf5f6 60%,#fbeaeb 65%,#f9dbdc 70%,#f5c8ca 75%,#f1b1b4 80%,#ec969a 85%,#e7787d 90%,#e1565c 95%,#da3038 100%);z-index:3"></div>
<div class="sw" style="left:1054px;top:324.9px;height:39.1px;background:linear-gradient(180deg,#000000 0%,#2e2e2e 5%,#585858 10%,#7e7e7e 15%,#9e9e9e 20%,#bbbbbb 25%,#d2d2d2 30%,#e5e5e5 35%,#f3f3f3 40%,#fcfcfc 45%,#ffffff 50%,#fcfcfc 55%,#f5f5f5 60%,#e9e9e9 65%,#dadada 70%,#c6c6c6 75%,#aeaeae 80%,#939393 85%,#747474 90%,#515151 95%,#2a2a2a 100%);z-index:3"></div>
<div class="sw" style="left:1054px;top:370.9px;height:39px;background:linear-gradient(90deg,#000000 0%,#2e2e2e 5%,#585858 10%,#7e7e7e 15%,#9e9e9e 20%,#bbbbbb 25%,#d2d2d2 30%,#e5e5e5 35%,#f3f3f3 40%,#fcfcfc 45%,#ffffff 50%,#fcfcfc 55%,#f5f5f5 60%,#e9e9e9 65%,#dadada 70%,#c6c6c6 75%,#aeaeae 80%,#939393 85%,#747474 90%,#515151 95%,#2a2a2a 100%);z-index:3"></div>
<svg style="left:16px;top:30px;" width="26" height="26" viewBox="0 0 26 26">
<path d="M1.5 1.5H8.5L11 4V17.5H1.5Z" fill="#fff" stroke="#7d7d7d" stroke-width="1"/>
<path d="M8.5 1.5V4H11" fill="none" stroke="#7d7d7d" stroke-width="0.8"/>
<rect x="3" y="3" width="5" height="2.6" fill="#e8b560"/><rect x="3" y="8.2" width="5.6" height="2.6" fill="#e8b560"/>
<path d="M3 13.9H8.6M3 16.3H8.6" stroke="#9a9a9a" stroke-width="1"/>
<path d="M10.5 5.5H19.5L23.8 9.8V23.5H10.5Z" fill="#fff" stroke="#7d7d7d" stroke-width="1"/>
<path d="M19.5 5.5V9.8H23.8" fill="none" stroke="#7d7d7d" stroke-width="0.8"/>
<path d="M12 7H16V22H12ZM17 10.8H22.3V22H17Z" fill="#c3d7ec"/>
<path d="M16 7H18.5V10H16Z" fill="#d6e4f2"/>
<path d="M2 17.8C1.5 21.5 4 23.2 7 22.8" fill="none" stroke="#2e75b6" stroke-width="1.7"/>
<path d="M5.6 19.8L9.3 22.6L5.4 25.2Z" fill="#2e75b6"/>
</svg>
<svg style="left:57px;top:30px;" width="26" height="24" viewBox="0 0 26 24">
<path d="M1 1.5H10M1 4.5H10M1 6.7H10M1 10.4H23.8M1 13.4H23.8M1 15.6H23.8M1 19.2H23.8M1 22.5H23.8" stroke="#cdcdcd" stroke-width="1"/>
<path d="M21.5 3.6L24 5.6L11.2 18.2L8.4 19.6L9.2 16.4Z" fill="#a9a9a9"/>
<path d="M22.3 2.6L24.8 4.7" stroke="#a9a9a9" stroke-width="1.5"/>
</svg>
<svg style="left:105px;top:30px;" width="22" height="26" viewBox="0 0 22 26">
<rect x="1.5" y="1.5" width="18.5" height="22.3" fill="#fff" stroke="#8a8a8a" stroke-width="1"/>
<path d="M5.6 2V23.5" stroke="#4b7fbe" stroke-width="1"/><path d="M15.6 2V23.5" stroke="#8fb2dc" stroke-width="1"/>
<path d="M2 5.6H19.5M2 20H19.5" stroke="#8fb2dc" stroke-width="1"/>
</svg>
<svg style="left:149px;top:30px;" width="28" height="27" viewBox="0 0 28 27">
<path d="M1.5 1.5H11L15.7 6.2V20H1.5Z" fill="#fff" stroke="#7d7d7d" stroke-width="1"/>
<path d="M11 1.5V6.2H15.7" fill="none" stroke="#7d7d7d" stroke-width="0.8"/>
<path d="M5.5 10.8H20.5L24.7 15V24.7H5.5Z" fill="#fff" stroke="#7d7d7d" stroke-width="1"/>
<path d="M20.5 10.8V15H24.7" fill="none" stroke="#7d7d7d" stroke-width="0.8"/>
<path d="M16.5 1.8C20.5 1.8 22.3 4.2 22 7.8" fill="none" stroke="#3d7cc0" stroke-width="1.5"/>
<path d="M19.2 6.2L22 9.6L24.9 6.2" fill="none" stroke="#3d7cc0" stroke-width="1.5"/>
</svg>
<svg style="left:196px;top:30px;" width="22" height="26" viewBox="0 0 22 26">
<path d="M4.5 5.3H15.2L19.8 9.9V23.7H4.5Z" fill="#fff" stroke="#7d7d7d" stroke-width="1"/>
<path d="M15.2 5.3V9.9H19.8" fill="none" stroke="#7d7d7d" stroke-width="0.8"/>
<path d="M1.5 5V24M0.3 5H2.8M0.3 23.8H2.8" stroke="#4b7fbe" stroke-width="1"/>
<path d="M4.5 1.5H19.8M4.5 0.4V3M19.8 0.4V3" stroke="#4b7fbe" stroke-width="1"/>
</svg>
<svg style="left:237px;top:30px;" width="22" height="26" viewBox="0 0 22 26">
<rect x="1.5" y="1.5" width="18.5" height="22.3" fill="#fff" stroke="#8a8a8a" stroke-width="1"/>
<path d="M5.6 2V23.5M2 5.6H19.5" stroke="#7fb39c" stroke-width="1"/>
</svg>
<svg style="left:338px;top:31px;" width="14" height="13" viewBox="0 0 14 13">
<path d="M3 0.8H7.5L9.8 3.2V5M4 11H1V0.8H3" fill="none" stroke="#5a5a5a" stroke-width="1"/>
<path d="M4.3 4.2L12.2 11.4M12.2 4.2L4.3 11.4" stroke="#d9481c" stroke-width="1.9"/>
</svg>
<svg style="left:338px;top:49px;" width="14" height="14" viewBox="0 0 14 14">
<path d="M5 12H1V0.8H6.5L9.8 4V6" fill="none" stroke="#c2c2c2" stroke-width="1"/>
<path d="M6.5 0.8V4H9.8" fill="none" stroke="#c2c2c2" stroke-width="0.8"/>
<path d="M10.5 12.5V6.5M8.5 8.6L10.5 6.3L12.5 8.6" fill="none" stroke="#bdbdbd" stroke-width="1.1"/>
<path d="M7 8V12.6M5.2 10.8L7 12.9L8.8 10.8" fill="none" stroke="#c8c8c8" stroke-width="1"/>
</svg>
<svg style="left:336px;top:66px;" width="15" height="15" viewBox="0 0 15 15">
<path d="M5.2 1.5H9.8L12.8 4.6V13.6H5.2Z" fill="#fff" stroke="#555" stroke-width="1"/>
<path d="M9.8 1.5V4.6H12.8" fill="none" stroke="#555" stroke-width="0.8"/>
<path d="M6.6 5.4H9" stroke="#5b9bd5" stroke-width="1.1"/><path d="M10 8.6H11.4" stroke="#e8a33d" stroke-width="1.3"/><path d="M6.6 11.3H11.4" stroke="#e8a33d" stroke-width="1.1"/>
<path d="M2.9 2V8.4M1.2 1.6C2.2 1.6 2.9 2 2.9 2.6C2.9 2 3.6 1.6 4.6 1.6M1.2 8.8C2.2 8.8 2.9 8.4 2.9 7.8C2.9 8.4 3.6 8.8 4.6 8.8" fill="none" stroke="#333" stroke-width="0.9"/>
</svg>
<svg style="left:869px;top:29px;" width="28" height="26" viewBox="0 0 28 26">
<path d="M10.2 9.4H26.5V24.4H10.2Z" fill="#dedede" stroke="#cfcfcf" stroke-width="0.8"/>
<path d="M10.6 24L17 14.5L21 19.5L23.5 17L26.1 20.5V24Z" fill="#adadad"/>
<path d="M7.8 4.7L14.2 8.8L9 16.9L2 11Z" fill="#f6f4f6" stroke="#c4c0c4" stroke-width="1" stroke-linejoin="round"/>
<path d="M5.6 7C4.6 2.2 9.4 0.8 10.4 6" fill="none" stroke="#c0c0c0" stroke-width="1"/>
<path d="M8.6 5.6V8.6" stroke="#c0c0c0" stroke-width="1"/>
</svg>
<svg style="left:967px;top:30px;" width="20" height="25" viewBox="0 0 20 25">
<path d="M1.5 1.5H12.5L17.5 6.5V23H1.5Z" fill="#fff" stroke="#9a9a9a" stroke-width="1"/>
<path d="M12.5 1.5V6.5H17.5" fill="none" stroke="#9a9a9a" stroke-width="0.8"/>
<path d="M4 9.5H15M4 9.5V20.5H15V9.5M9.5 9.5V20.5" fill="none" stroke="#9a9a9a" stroke-width="0.9"/>
</svg>
<svg style="left:990.05px;top:76.89999999999999px" width="4.5" height="2.8" viewBox="0 0 4.5 2.8"><path d="M0 0H4.5L2.25 2.8Z" fill="#6a6a6a"/></svg>
<span class="t" style="left:20.60px;top:10.11px;font-size:9.6px;color:#fff;letter-spacing:0.029px;transform:scaleX(0.94);">File</span>
<span class="t" style="left:65.90px;top:10.11px;font-size:9.6px;color:#fff;letter-spacing:0.836px;transform:scaleX(0.94);">Home</span>
<span class="t" style="left:116.50px;top:10.11px;font-size:9.6px;color:#fff;letter-spacing:0.122px;transform:scaleX(0.94);">Insert</span>
<span class="t" style="left:164.60px;top:10.11px;font-size:9.6px;color:#0b7466;letter-spacing:0.122px;transform:scaleX(0.94);">Page Design</span>
<span class="t" style="left:241.60px;top:10.11px;font-size:9.6px;color:#fff;letter-spacing:0.440px;transform:scaleX(0.94);">Mailings</span>
<span class="t" style="left:301.60px;top:10.11px;font-size:9.6px;color:#fff;letter-spacing:0.145px;transform:scaleX(0.94);">Review</span>
<span class="t" style="left:355.20px;top:10.11px;font-size:9.6px;color:#fff;letter-spacing:0.322px;transform:scaleX(0.94);">View</span>
<span class="t" style="left:409.70px;top:10.11px;font-size:9.6px;color:#fff;letter-spacing:0.414px;transform:scaleX(0.94);">Format</span>
<span class="t" style="left:480.50px;top:10.11px;font-size:9.6px;color:#fff;letter-spacing:0.343px;transform:scaleX(0.94);">Format</span>
<span class="t" style="left:1081.80px;top:10.11px;font-size:9.6px;color:#fff;letter-spacing:0.337px;transform:scaleX(0.94);">Sign in</span>
<span class="t" style="left:12.50px;top:58.75px;font-size:10px;color:#343434;letter-spacing:-0.041px;transform:scaleX(0.94);">Change</span>
<span class="t" style="left:9.40px;top:71.65px;font-size:10px;color:#343434;letter-spacing:0.074px;transform:scaleX(0.94);">Template</span>
<span class="t" style="left:52.50px;top:58.75px;font-size:10px;color:#a6a6a6;letter-spacing:0.205px;transform:scaleX(0.94);">Options</span>
<span class="t" style="left:97.50px;top:58.75px;font-size:10px;color:#343434;letter-spacing:0.237px;transform:scaleX(0.94);">Margins</span>
<span class="t" style="left:136.90px;top:58.75px;font-size:10px;color:#343434;letter-spacing:0.325px;transform:scaleX(0.94);">Orientation</span>
<span class="t" style="left:198.50px;top:58.75px;font-size:10px;color:#343434;letter-spacing:-0.741px;transform:scaleX(0.94);">Size</span>
<span class="t" style="left:233.75px;top:58.75px;font-size:10px;color:#343434;letter-spacing:-0.290px;transform:scaleX(0.94);">Guides</span>
<span class="t" style="left:28.50px;top:87.91px;font-size:9.6px;color:#6a6a6a;letter-spacing:0.153px;transform:scaleX(0.94);">Template</span>
<span class="t" style="left:128.50px;top:87.91px;font-size:9.6px;color:#6a6a6a;letter-spacing:0.059px;transform:scaleX(0.94);">Page Setup</span>
<span class="t" style="left:265.00px;top:87.91px;font-size:9.6px;color:#6a6a6a;letter-spacing:-0.104px;transform:scaleX(0.94);">Layout</span>
<span class="t" style="left:352.00px;top:87.91px;font-size:9.6px;color:#6a6a6a;letter-spacing:-0.334px;transform:scaleX(0.94);">Pages</span>
<span class="t" style="left:610.40px;top:87.91px;font-size:9.6px;color:#6a6a6a;letter-spacing:-0.304px;transform:scaleX(0.94);">Schemes</span>
<span class="t" style="left:272.00px;top:31.65px;font-size:10px;color:#343434;letter-spacing:0.228px;transform:scaleX(0.94);">Align To</span>
<span class="t" style="left:289.60px;top:50.05px;font-size:10px;color:#343434;letter-spacing:-0.157px;transform:scaleX(0.94);">Guides</span>
<span class="t" style="left:289.60px;top:69.25px;font-size:10px;color:#343434;letter-spacing:0.080px;transform:scaleX(0.94);">Objects</span>
<span class="t" style="left:353.75px;top:31.65px;font-size:10px;color:#343434;letter-spacing:-0.163px;transform:scaleX(0.94);">Delete</span>
<span class="t" style="left:353.75px;top:50.05px;font-size:10px;color:#a6a6a6;letter-spacing:0.070px;transform:scaleX(0.94);">Move</span>
<span class="t" style="left:353.75px;top:69.25px;font-size:10px;color:#343434;letter-spacing:-0.229px;transform:scaleX(0.94);">Rename</span>
<span class="t" style="left:454.50px;top:32.95px;font-size:10px;color:#262626;letter-spacing:-0.114px;transform:scaleX(0.94);">Apex</span>
<span class="t" style="left:454.50px;top:49.25px;font-size:10px;color:#262626;letter-spacing:0.076px;transform:scaleX(0.94);">Concourse</span>
<span class="t" style="left:454.50px;top:65.55px;font-size:10px;color:#262626;letter-spacing:0.170px;transform:scaleX(0.94);">Median</span>
<span class="t" style="left:555.50px;top:32.95px;font-size:10px;color:#262626;letter-spacing:-0.079px;transform:scaleX(0.94);">Aspect</span>
<span class="t" style="left:555.50px;top:49.25px;font-size:10px;color:#262626;letter-spacing:-0.200px;transform:scaleX(0.94);">Equity</span>
<span class="t" style="left:555.50px;top:65.55px;font-size:10px;color:#262626;letter-spacing:0.100px;transform:scaleX(0.94);">Metro</span>
<span class="t" style="left:655.20px;top:32.95px;font-size:10px;color:#262626;letter-spacing:0.173px;transform:scaleX(0.94);">Black &amp; ...</span>
<span class="t" style="left:655.20px;top:49.25px;font-size:10px;color:#262626;letter-spacing:0.091px;transform:scaleX(0.94);">Flow</span>
<span class="t" style="left:655.20px;top:65.55px;font-size:10px;color:#262626;letter-spacing:0.577px;transform:scaleX(0.94);">Module</span>
<span class="t" style="left:757.80px;top:32.95px;font-size:10px;color:#262626;letter-spacing:0.006px;transform:scaleX(0.94);">Civic</span>
<span class="t" style="left:757.80px;top:49.25px;font-size:10px;color:#262626;letter-spacing:0.048px;transform:scaleX(0.94);">Foundry</span>
<span class="t" style="left:757.80px;top:65.55px;font-size:10px;color:#262626;letter-spacing:-0.014px;transform:scaleX(0.94);">Office</span>
<span class="t" style="left:830.70px;top:33.37px;font-size:17.6px;color:#444;letter-spacing:-0.181px;transform:scaleX(0.94);">Aa</span>
<span class="t" style="left:828.70px;top:58.35px;font-size:10px;color:#343434;letter-spacing:-0.046px;transform:scaleX(0.94);">Fonts</span>
<span class="t" style="left:871.00px;top:58.85px;font-size:10px;color:#a6a6a6;letter-spacing:0.210px;transform:scaleX(0.94);">Apply</span>
<span class="t" style="left:869.50px;top:72.45px;font-size:10px;color:#a6a6a6;letter-spacing:0.292px;transform:scaleX(0.94);">Image</span>
<span class="t" style="left:960.50px;top:59.45px;font-size:10px;color:#343434;letter-spacing:0.491px;transform:scaleX(0.94);">Master</span>
<span class="t" style="left:960.50px;top:72.45px;font-size:10px;color:#343434;letter-spacing:0.179px;transform:scaleX(0.94);">Pages</span>
<span class="t" style="left:898.50px;top:66.30px;font-size:12.6px;color:#3a3a3a;letter-spacing:0.023px;transform:scaleX(0.94);z-index:8;">Background</span>
<span class="t" style="left:864.20px;top:88.25px;font-size:10px;color:#333;letter-spacing:0.082px;transform:scaleX(0.94);-webkit-text-stroke:0.3px #333;z-index:4;">No Background</span>
<span class="t" style="left:864.20px;top:151.65px;font-size:10px;color:#333;letter-spacing:0.307px;transform:scaleX(0.94);-webkit-text-stroke:0.3px #333;z-index:4;">Solid Background</span>
<span class="t" style="left:863.90px;top:306.75px;font-size:10px;color:#333;letter-spacing:0.384px;transform:scaleX(0.94);-webkit-text-stroke:0.3px #333;z-index:4;">Gradient Background</span>
<span class="t" style="left:881.30px;top:418.25px;font-size:10px;color:#333;letter-spacing:0.094px;transform:scaleX(0.94);z-index:4;">More <u>B</u>ackgrounds...</span>
<span class="t" style="left:10.20px;top:109.80px;font-size:16.8px;color:#0b7a6b;letter-spacing:-0.093px;transform:scaleX(0.94);">Pages</span>
<span class="t" style="left:57.50px;top:268.41px;font-size:7.5px;color:#333;letter-spacing:0.083px;font-weight:700;transform:scaleX(0.94);">1</span>
<span class="t" style="left:33.40px;top:192.58px;font-size:8.2px;color:#333;letter-spacing:0.495px;transform:scaleX(0.94);">Selena &amp; Dar-</span>
<span class="t" style="left:45.00px;top:216.36px;font-size:7px;color:#333;letter-spacing:0.226px;transform:scaleX(0.94);">05.22.203</span>
<span class="t" style="left:56.60px;top:521.62px;font-size:16px;color:#2a2a2a;letter-spacing:0.000px;font-weight:700;transform:scaleX(0.9596471885336273);-webkit-text-stroke:0.35px #2a2a2a;z-index:9;">TEMPLATE</span>
<span class="t" style="left:138.40px;top:521.62px;font-size:16px;color:#2a2a2a;letter-spacing:0.000px;transform:scaleX(0.9601371624517788);z-index:9;">.NET</span>
<span class="t" style="left:36.50px;top:522.27px;font-size:16.5px;color:#fff;letter-spacing:0.606px;font-weight:700;z-index:10;">T</span>
<span class="t" style="left:542.40px;top:261.73px;font-size:9.8px;color:#2b2b2b;letter-spacing:0.044px;transform:scaleX(0.87);">PLEASE JOIN US FOR THE WEDDING OF</span>
<span class="t" style="left:487.70px;top:305.91px;font-size:43.3px;color:#2e2e2e;letter-spacing:2.169px;transform:scaleX(0.88);">Selena</span>
<span class="t" style="left:631.30px;top:305.91px;font-size:43.3px;color:#2e2e2e;letter-spacing:0.306px;transform:scaleX(1.12);">&amp;</span>
<span class="t" style="left:676.30px;top:305.91px;font-size:43.3px;color:#2e2e2e;letter-spacing:3.036px;transform:scaleX(0.9);">Dar-</span>
<span class="t" style="left:561.00px;top:373.57px;font-size:9.2px;color:#2b2b2b;letter-spacing:0.250px;transform:scaleX(0.9197562326869809);">ST. MICHAEL PARISH CHURCH</span>
<span class="t" style="left:530.20px;top:396.27px;font-size:9.2px;color:#2b2b2b;letter-spacing:0.026px;transform:scaleX(0.87);">128 HOLY SHROUDE, LOS ANGELES, CALIFORNIA</span>
<span class="t" style="left:551.20px;top:427.74px;font-size:32px;color:#2e2e2e;letter-spacing:0.605px;">05.22.203</span>
<span class="t" style="left:557.20px;top:476.73px;font-size:9.8px;color:#2b2b2b;letter-spacing:0.250px;transform:scaleX(0.8734337056823701);">NINE O'CLOCK IN THE MORNING</span>
<span class="t" style="left:574.40px;top:506.03px;font-size:9.8px;color:#2b2b2b;letter-spacing:0.019px;transform:scaleX(0.87);">RECEPTION TO FOLLOW</span>
<span class="t" style="left:196.90px;top:103.64px;font-size:7.8px;color:#5c5248;letter-spacing:-0.088px;transform:scaleX(0.94);">3</span>
<span class="t" style="left:275.20px;top:103.64px;font-size:7.8px;color:#5c5248;letter-spacing:-0.088px;transform:scaleX(0.94);">2</span>
<span class="t" style="left:353.50px;top:103.64px;font-size:7.8px;color:#5c5248;letter-spacing:-0.088px;transform:scaleX(0.94);">1</span>
<span class="t" style="left:431.80px;top:103.64px;font-size:7.8px;color:#5c5248;letter-spacing:-0.088px;transform:scaleX(0.94);">0</span>
<span class="t" style="left:510.10px;top:103.64px;font-size:7.8px;color:#5c5248;letter-spacing:-0.088px;transform:scaleX(0.94);">1</span>
<span class="t" style="left:588.40px;top:103.64px;font-size:7.8px;color:#5c5248;letter-spacing:-0.088px;transform:scaleX(0.94);">2</span>
<span class="t" style="left:666.70px;top:103.64px;font-size:7.8px;color:#5c5248;letter-spacing:-0.088px;transform:scaleX(0.94);">3</span>
<span class="t" style="left:745.00px;top:103.64px;font-size:7.8px;color:#5c5248;letter-spacing:-0.088px;transform:scaleX(0.94);">4</span>
<span class="t" style="left:823.30px;top:103.64px;font-size:7.8px;color:#5c5248;letter-spacing:-0.088px;transform:scaleX(0.94);">5</span>
<span class="t" style="left:121.50px;top:118.14px;font-size:7.8px;color:#5c5248;letter-spacing:-0.088px;transform:scaleX(0.94);">0</span>
<span class="t" style="left:121.30px;top:197.04px;font-size:7.8px;color:#5c5248;letter-spacing:-0.088px;transform:scaleX(0.94);">1</span>
<span class="t" style="left:121.30px;top:275.24px;font-size:7.8px;color:#5c5248;letter-spacing:-0.088px;transform:scaleX(0.94);">2</span>
<span class="t" style="left:121.30px;top:353.44px;font-size:7.8px;color:#5c5248;letter-spacing:-0.088px;transform:scaleX(0.94);">3</span>
<span class="t" style="left:121.30px;top:431.64px;font-size:7.8px;color:#5c5248;letter-spacing:-0.088px;transform:scaleX(0.94);">4</span>
<span class="t" style="left:121.30px;top:509.84px;font-size:7.8px;color:#5c5248;letter-spacing:-0.088px;transform:scaleX(0.94);">5</span>
<div class="a" style="left:896.3px;top:27.1px;width:69.5px;height:69.9px;background:#c6c6c6;box-shadow:-5px 6px 9px 0px rgba(0,0,0,0.8);z-index:6;"></div>
<svg style="z-index:8;left:928.0px;top:86.85px" width="6" height="3.5" viewBox="0 0 6 3.5"><path d="M0 0H6L3.0 3.5Z" fill="#444"/></svg>
<svg style="left:916px;top:30px;z-index:8" width="32" height="32" viewBox="0 0 32 32">
<path d="M8.5 2.5H23.5L29.3 8.3V30.3H8.5Z" fill="#c4d8ee" stroke="#a3a3a3" stroke-width="1"/>
<path d="M23.5 2.5V8.3H29.3Z" fill="#fff" stroke="#a3a3a3" stroke-width="0.9"/>
<path d="M15.6 11.2C21.8 13.5 21.6 21.5 14.6 25C17.6 20.8 17.9 15.6 15.6 11.2Z" fill="#2e75b6"/>
<path d="M8 9L17.4 16.7L9.7 25.6L0.8 18Z" fill="#fff" stroke="#444" stroke-width="1.1" stroke-linejoin="round"/>
<path d="M5.3 12C4.6 6.4 10.6 5.8 11 11.6" fill="none" stroke="#444" stroke-width="1"/>
<path d="M9.6 11.4V14.6" stroke="#444" stroke-width="1.1"/>
</svg>
<svg style="left:0;top:0;z-index:7;pointer-events:none" width="1121" height="561" viewBox="0 0 1121 561">
<defs><filter id="ash" x="-10%" y="-10%" width="130%" height="130%"><feGaussianBlur stdDeviation="6"/></filter></defs>
<path transform="translate(-7,5)" d="M594.9 313.9C595.5 310.8 597.0 300.6 598.2 295.0C599.4 289.4 599.4 289.2 601.9 280.0C604.4 270.8 608.2 255.0 613.5 240.0C618.8 225.0 626.2 205.0 633.7 190.0C641.2 175.0 649.6 161.7 658.8 150.0C668.0 138.3 681.6 126.7 688.7 120.0C695.9 113.3 696.6 113.3 701.7 110.0C706.8 106.7 712.9 103.3 719.2 100.0C725.5 96.7 732.9 92.7 739.3 90.0C745.7 87.3 750.7 86.0 757.7 84.0C764.7 82.0 773.7 79.7 781.2 78.0C788.7 76.3 796.6 74.9 802.8 74.0C809.0 73.1 812.5 72.9 818.5 72.7C824.5 72.5 835.3 72.6 838.7 72.6L837.6 60.8L882.2 75.1L841.6 97.8L839.6 82.8C837.2 83.0 833.2 82.8 825.4 84.0C817.6 85.2 802.7 87.3 792.8 90.0C782.9 92.7 774.0 96.7 766.0 100.0C758.0 103.3 750.6 106.7 744.5 110.0C738.4 113.3 735.8 115.0 729.3 120.0C722.8 125.0 710.5 135.0 705.2 140.0C699.9 145.0 702.3 143.3 697.6 150.0C692.9 156.7 683.5 166.7 677.0 180.0C670.5 193.3 663.5 213.3 658.9 230.0C654.3 246.7 651.2 269.2 649.4 280.0C647.5 290.8 648.4 288.6 647.8 295.0C647.2 301.4 646.1 314.7 645.7 318.6Z" fill="#000" opacity="0.42" filter="url(#ash)"/>
<path d="M594.9 313.9C595.5 310.8 597.0 300.6 598.2 295.0C599.4 289.4 599.4 289.2 601.9 280.0C604.4 270.8 608.2 255.0 613.5 240.0C618.8 225.0 626.2 205.0 633.7 190.0C641.2 175.0 649.6 161.7 658.8 150.0C668.0 138.3 681.6 126.7 688.7 120.0C695.9 113.3 696.6 113.3 701.7 110.0C706.8 106.7 712.9 103.3 719.2 100.0C725.5 96.7 732.9 92.7 739.3 90.0C745.7 87.3 750.7 86.0 757.7 84.0C764.7 82.0 773.7 79.7 781.2 78.0C788.7 76.3 796.6 74.9 802.8 74.0C809.0 73.1 812.5 72.9 818.5 72.7C824.5 72.5 835.3 72.6 838.7 72.6L837.6 60.8L882.2 75.1L841.6 97.8L839.6 82.8C837.2 83.0 833.2 82.8 825.4 84.0C817.6 85.2 802.7 87.3 792.8 90.0C782.9 92.7 774.0 96.7 766.0 100.0C758.0 103.3 750.6 106.7 744.5 110.0C738.4 113.3 735.8 115.0 729.3 120.0C722.8 125.0 710.5 135.0 705.2 140.0C699.9 145.0 702.3 143.3 697.6 150.0C692.9 156.7 683.5 166.7 677.0 180.0C670.5 193.3 663.5 213.3 658.9 230.0C654.3 246.7 651.2 269.2 649.4 280.0C647.5 290.8 648.4 288.6 647.8 295.0C647.2 301.4 646.1 314.7 645.7 318.6Z" fill="#2b82ea"/>
</svg>
<div class="a" style="left:32.2px;top:520.4px;width:19.3px;height:19.8px;border-radius:4.5px;background:linear-gradient(135deg,#2aa9fb,#1f7af0);z-index:9"></div>
<div class="a" style="left:1114px;top:0px;width:7px;height:561px;background:#2b82ea;z-index:20;"></div>
<div class="a" style="left:0px;top:553px;width:1121px;height:8px;background:#2b82ea;z-index:20;"></div>
</body></html>
